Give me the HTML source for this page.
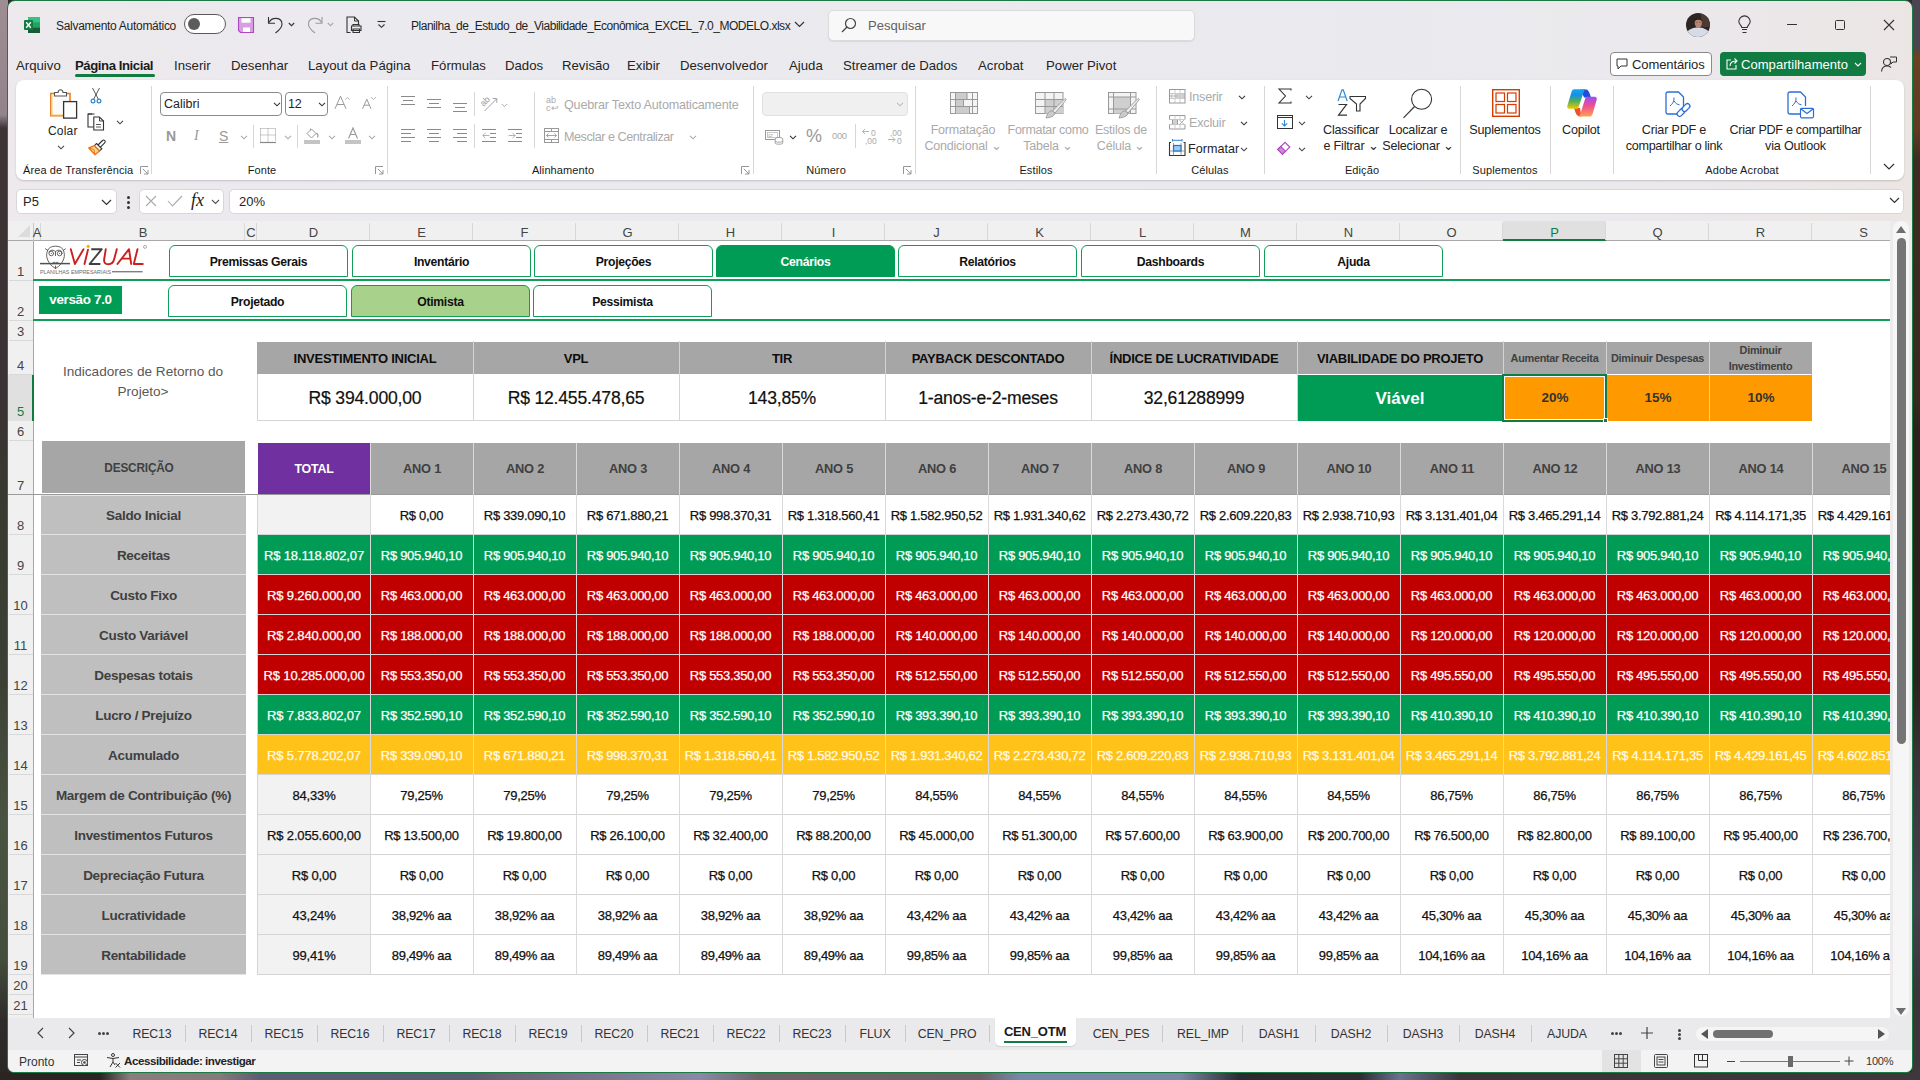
<!DOCTYPE html>
<html><head><meta charset="utf-8"><style>
*{margin:0;padding:0;box-sizing:border-box}
html,body{width:1920px;height:1080px;overflow:hidden;background:#3a3836;font-family:"Liberation Sans",sans-serif}
div{position:absolute}
.t{white-space:nowrap;line-height:1}
.c{display:flex;align-items:center;justify-content:center;white-space:nowrap;overflow:hidden;line-height:1}
svg{position:absolute;overflow:visible}
.ui{color:#242424;font-size:13px}
.cell{font-size:13px;letter-spacing:-0.3px}
.rg{-webkit-text-stroke:0.25px currentColor}
</style></head><body>

<div style="left:0;top:0;width:1920px;height:1080px;background:#2f2b2a"></div>
<div style="left:0;top:0;width:8px;height:1080px;background:linear-gradient(180deg,#9e8e94 0px,#92848a 115px,#3e3436 128px,#3a3234 400px,#383a30 500px,#3c4034 675px,#4a5240 820px,#454d3c 960px,#2e2c2a 1020px,#2a2624 1080px)"></div>
<div style="left:1912px;top:0;width:8px;height:1080px;background:linear-gradient(180deg,#4a4550 0px,#4a4550 48px,#6a4224 55px,#5e3b22 130px,#3f2b21 160px,#3a281f 400px,#2a211c 430px,#2a221e 680px,#3a3338 760px,#45424f 900px,#3a3438 1000px,#3e383c 1080px)"></div>
<div style="left:0;top:1072px;width:1920px;height:8px;background:linear-gradient(90deg,#2a2422 0px,#2a2422 100px,#8a7d7d 130px,#857a7c 220px,#5b5d72 260px,#5a5c70 470px,#6a6275 500px,#8a8aa6 700px,#6e6266 760px,#6a6064 980px,#7888a8 1020px,#7a88a4 1180px,#2a2a30 1240px,#2c2c32 1360px,#6a7290 1400px,#3a3438 1460px,#3e383c 1920px)"></div>
<div style="left:7px;top:0;width:1906px;height:1073px;background:linear-gradient(90deg,#EDE9ED 0px,#EBEAEF 400px,#EAEAEE 1400px,#EBE8EB 1720px,#EBE6E4 1906px);border:1px solid #1E7A45;border-radius:8px 8px 7px 7px"></div>
<svg style="left:24px;top:17px" width="16" height="16" viewBox="0 0 16 16">
<rect x="4" y="0" width="12" height="16" rx="1" fill="#21A366"/>
<rect x="4" y="0" width="12" height="5.3" fill="#33C481"/>
<rect x="4" y="10.7" width="12" height="5.3" fill="#185C37"/>
<rect x="0" y="3" width="9" height="10" rx="1" fill="#107C41"/>
<path d="M2.2 5.2 L6.8 10.8 M6.8 5.2 L2.2 10.8" stroke="#fff" stroke-width="1.4"/>
</svg>
<div class="t" style="left:56px;top:20px;font-size:12px;color:#1f1f1f;letter-spacing:-0.29px">Salvamento Automático</div>
<div style="left:184px;top:14px;width:42px;height:20px;border:1px solid #5a5a5a;border-radius:10px;background:#fff"></div>
<div style="left:188px;top:18px;width:12px;height:12px;border-radius:6px;background:#5c5c5c"></div>
<svg style="left:237px;top:16px" width="18" height="18" viewBox="0 0 18 18">
<path d="M1.5 1.5 H16.5 V16.5 H3.5 L1.5 14.5 Z" fill="#D89EE2" stroke="#B146C2" stroke-width="1.1"/>
<rect x="4.5" y="2.2" width="9" height="4.5" fill="#fff"/>
<rect x="6" y="11.5" width="7" height="4.5" fill="#fff"/>
</svg>
<svg style="left:267px;top:16px" width="18" height="18" viewBox="0 0 18 18">
<path d="M1.5 1 V7.3 H8" fill="none" stroke="#333" stroke-width="1.1"/>
<path d="M2 6.5 C4.5 1 14.8 0.5 15 8 C15.2 11.5 12.5 14 8.5 17" fill="none" stroke="#333" stroke-width="1.1"/>
</svg>
<svg style="left:288px;top:22px" width="7" height="5" viewBox="0 0 7 5"><path d="M0.8 1 L3.5 3.7 L6.2 1" fill="none" stroke="#333" stroke-width="1.1"/></svg>
<svg style="left:306px;top:16px" width="18" height="18" viewBox="0 0 18 18">
<path d="M16 1 V7.3 H9.5" fill="none" stroke="#9a9a9a" stroke-width="1.1"/>
<path d="M15.5 6.5 C13 1 2.7 0.5 2.5 8 C2.3 11.5 5 14 9 17" fill="none" stroke="#9a9a9a" stroke-width="1.1"/>
</svg>
<svg style="left:327px;top:22px" width="7" height="5" viewBox="0 0 7 5"><path d="M0.8 1 L3.5 3.7 L6.2 1" fill="none" stroke="#aaa" stroke-width="1.1"/></svg>
<svg style="left:346px;top:16px" width="17" height="18" viewBox="0 0 17 18">
<path d="M4.5 16.5 H1 V1 H8.5 L12.5 5 V8" fill="none" stroke="#333" stroke-width="1.1"/>
<path d="M8.5 1 V5 H12.5" fill="none" stroke="#333" stroke-width="1"/>
<path d="M7 10 V8.5 H13 V10 M5.5 10 H15 V14.5 H5.5 Z M7 13 H13.5 V16.5 H7 Z" fill="#EDEAEE" stroke="#333" stroke-width="1.1"/>
</svg>
<svg style="left:377px;top:20px" width="9" height="9" viewBox="0 0 9 9"><path d="M0.5 1.5 H8.5" stroke="#333" stroke-width="1.1"/><path d="M1.5 4.5 L4.5 7.3 L7.5 4.5" fill="none" stroke="#333" stroke-width="1.1"/></svg>
<div class="t" style="left:411px;top:20px;font-size:12px;color:#1f1f1f;letter-spacing:-0.475px">Planilha_de_Estudo_de_Viabilidade_Econômica_EXCEL_7.0_MODELO.xlsx</div>
<svg style="left:794px;top:21px" width="11" height="7" viewBox="0 0 11 7"><path d="M1 1 L5.5 5.5 L10 1" fill="none" stroke="#333" stroke-width="1.2"/></svg>
<div style="left:828px;top:10px;width:367px;height:31px;background:#F9F8F9;border:1px solid #DDDADD;border-radius:5px;box-shadow:0 1px 1px rgba(0,0,0,0.08)"></div>
<svg style="left:841px;top:17px" width="16" height="16" viewBox="0 0 16 16"><circle cx="9.5" cy="6.5" r="5" fill="none" stroke="#444" stroke-width="1.2"/><path d="M6 10 L1 15" stroke="#444" stroke-width="1.3"/></svg>
<div class="t" style="left:868px;top:19px;font-size:13px;color:#616161">Pesquisar</div>
<svg style="left:1686px;top:13px" width="24" height="24" viewBox="0 0 24 24">
<defs><clipPath id="av"><circle cx="12" cy="12" r="12"/></clipPath></defs>
<g clip-path="url(#av)"><rect width="24" height="24" fill="#2e2522"/><rect x="15" y="0" width="9" height="14" fill="#4a3a33"/>
<ellipse cx="12.3" cy="10" rx="3.6" ry="4.6" fill="#b88470"/><path d="M8.5 8 C8.5 4.2 16 4.2 16 8 C15 6.3 9.5 6.3 8.5 8Z" fill="#1b1411"/>
<path d="M9.8 9.3 H11.6 M13 9.3 H14.8" stroke="#555" stroke-width="0.6"/>
<path d="M-1 24 C0 17 6 14.5 12 14.5 C18 14.5 24 17 25 24Z" fill="#d7dbe8"/></g></svg>
<svg style="left:1738px;top:16px" width="13" height="18" viewBox="0 0 13 18">
<path d="M3.8 11.5 C3.8 9.5 0.8 8.5 0.8 5.6 A5.7 5.7 0 0 1 12.2 5.6 C12.2 8.5 9.2 9.5 9.2 11.5 Z" fill="none" stroke="#333" stroke-width="1.1"/>
<path d="M4 13.5 H9 M4.5 16.5 H8.5" stroke="#333" stroke-width="1.2"/></svg>
<div style="left:1787px;top:24px;width:10px;height:1px;background:#333"></div>
<div style="left:1835px;top:20px;width:10px;height:10px;border:1px solid #333;border-radius:1.5px"></div>
<svg style="left:1883px;top:19px" width="12" height="12" viewBox="0 0 12 12"><path d="M1 1 L11 11 M11 1 L1 11" stroke="#333" stroke-width="1.1"/></svg>
<div class="t" style="left:16px;top:59px;font-size:13.2px;color:#242424">Arquivo</div>
<div class="t" style="left:75px;top:59px;font-size:13.2px;color:#242424;font-weight:bold;letter-spacing:-0.45px;color:#1b1b1b">Página Inicial</div>
<div class="t" style="left:174px;top:59px;font-size:13.2px;color:#242424">Inserir</div>
<div class="t" style="left:231px;top:59px;font-size:13.2px;color:#242424">Desenhar</div>
<div class="t" style="left:308px;top:59px;font-size:13.2px;color:#242424">Layout da Página</div>
<div class="t" style="left:431px;top:59px;font-size:13.2px;color:#242424">Fórmulas</div>
<div class="t" style="left:505px;top:59px;font-size:13.2px;color:#242424">Dados</div>
<div class="t" style="left:562px;top:59px;font-size:13.2px;color:#242424">Revisão</div>
<div class="t" style="left:627px;top:59px;font-size:13.2px;color:#242424">Exibir</div>
<div class="t" style="left:680px;top:59px;font-size:13.2px;color:#242424">Desenvolvedor</div>
<div class="t" style="left:789px;top:59px;font-size:13.2px;color:#242424">Ajuda</div>
<div class="t" style="left:843px;top:59px;font-size:13.2px;color:#242424">Streamer de Dados</div>
<div class="t" style="left:978px;top:59px;font-size:13.2px;color:#242424">Acrobat</div>
<div class="t" style="left:1046px;top:59px;font-size:13.2px;color:#242424">Power Pivot</div>
<div style="left:75px;top:74px;width:80px;height:3px;background:#107C41;border-radius:2px"></div>
<div style="left:1610px;top:52px;width:102px;height:24px;background:#fff;border:1px solid #8a8a8a;border-radius:4px"></div>
<svg style="left:1616px;top:58px" width="12" height="12" viewBox="0 0 12 12"><path d="M1 1 H11 V8 H5 L2 11 V8 H1 Z" fill="none" stroke="#333" stroke-width="1"/></svg>
<div class="t" style="left:1632px;top:58px;font-size:13px;color:#242424;letter-spacing:-0.1px">Comentários</div>
<div style="left:1720px;top:52px;width:146px;height:24px;background:#107C41;border-radius:4px"></div>
<svg style="left:1726px;top:57px" width="13" height="13" viewBox="0 0 13 13"><path d="M5 3 H1 V12 H10 V8" fill="none" stroke="#fff" stroke-width="1.1"/><path d="M4 9 C4 5 7 4 11 4 M8.5 1.5 L11 4 L8.5 6.5" fill="none" stroke="#fff" stroke-width="1.1"/></svg>
<div class="t" style="left:1741px;top:58px;font-size:13px;color:#fff;letter-spacing:0.05px">Compartilhamento</div>
<svg style="left:1854px;top:62px" width="8" height="5" viewBox="0 0 8 5"><path d="M1 1 L4 4 L7 1" fill="none" stroke="#fff" stroke-width="1.1"/></svg>
<svg style="left:1881px;top:56px" width="16" height="16" viewBox="0 0 16 16"><circle cx="6" cy="6" r="3.5" fill="none" stroke="#333" stroke-width="1.1"/><path d="M0.5 15.5 C1 11 3 10 6 10 C8 10 9 10.5 10 11.5" fill="none" stroke="#333" stroke-width="1.1"/><path d="M9 1 H15.5 V6 H12 L10 8 V6 H9" fill="none" stroke="#333" stroke-width="1"/></svg>
<div style="left:16px;top:80px;width:1888px;height:100px;background:#fff;border-radius:8px;box-shadow:0 1px 2px rgba(0,0,0,0.18)"></div>
<div style="left:16px;top:189px;width:101px;height:25px;background:#fff;border:1px solid #d9d6d9;border-radius:5px"></div>
<div class="t" style="left:23px;top:195px;font-size:13px;color:#242424">P5</div>
<svg style="left:101px;top:199px" width="11" height="7" viewBox="0 0 11 7"><path d="M1 1 L5.5 5.5 L10 1" fill="none" stroke="#333" stroke-width="1.2"/></svg>
<div style="left:127px;top:196px;width:3px;height:3px;background:#333;border-radius:1.5px"></div>
<div style="left:127px;top:201px;width:3px;height:3px;background:#333;border-radius:1.5px"></div>
<div style="left:127px;top:206px;width:3px;height:3px;background:#333;border-radius:1.5px"></div>
<div style="left:139px;top:189px;width:85px;height:25px;background:#fff;border:1px solid #d9d6d9;border-radius:5px"></div>
<svg style="left:145px;top:195px" width="12" height="12" viewBox="0 0 12 12"><path d="M1 1 L11 11 M11 1 L1 11" stroke="#aaa" stroke-width="1.1"/></svg>
<svg style="left:167px;top:195px" width="16" height="12" viewBox="0 0 16 12"><path d="M1 6 L5.5 11 L15 1" fill="none" stroke="#aaa" stroke-width="1.1"/></svg>
<div class="t" style="left:191px;top:191px;font-family:'Liberation Serif';font-size:18px;color:#222"><i>fx</i></div>
<svg style="left:211px;top:199px" width="9" height="6" viewBox="0 0 9 6"><path d="M1 1 L4.5 4.5 L8 1" fill="none" stroke="#555" stroke-width="1.1"/></svg>
<div style="left:229px;top:189px;width:1675px;height:25px;background:#fff;border:1px solid #d9d6d9;border-radius:5px"></div>
<div class="t" style="left:239px;top:195px;font-size:13px;color:#242424">20%</div>
<svg style="left:1889px;top:197px" width="11" height="7" viewBox="0 0 11 7"><path d="M1 1 L5.5 5.5 L10 1" fill="none" stroke="#333" stroke-width="1.2"/></svg>
<div style="left:8px;top:221px;width:1882px;height:797px;background:#fff"></div>
<div style="left:8px;top:221px;width:1882px;height:20px;background:#F0F0F0;border-bottom:1px solid #A8A8A8"></div>
<div style="left:33px;top:223px;width:1px;height:18px;background:#C8C8C8"></div>
<svg style="left:18px;top:225px" width="12" height="12" viewBox="0 0 12 12"><path d="M12 0 V12 H0 Z" fill="#DCDCDC"/></svg>
<div style="left:40px;top:223px;width:1px;height:17px;background:#D8D8D8"></div>
<div class="c" style="left:33px;top:222px;width:8px;height:20px;font-size:13px;color:#444;overflow:visible">A</div>
<div style="left:244px;top:223px;width:1px;height:17px;background:#D8D8D8"></div>
<div class="c" style="left:41px;top:222px;width:204px;height:20px;font-size:13px;color:#444;overflow:visible">B</div>
<div style="left:256px;top:223px;width:1px;height:17px;background:#D8D8D8"></div>
<div class="c" style="left:245px;top:222px;width:12px;height:20px;font-size:13px;color:#444;overflow:visible">C</div>
<div style="left:369px;top:223px;width:1px;height:17px;background:#D8D8D8"></div>
<div class="c" style="left:257px;top:222px;width:113px;height:20px;font-size:13px;color:#444;overflow:visible">D</div>
<div style="left:472px;top:223px;width:1px;height:17px;background:#D8D8D8"></div>
<div class="c" style="left:370px;top:222px;width:103px;height:20px;font-size:13px;color:#444;overflow:visible">E</div>
<div style="left:575px;top:223px;width:1px;height:17px;background:#D8D8D8"></div>
<div class="c" style="left:473px;top:222px;width:103px;height:20px;font-size:13px;color:#444;overflow:visible">F</div>
<div style="left:678px;top:223px;width:1px;height:17px;background:#D8D8D8"></div>
<div class="c" style="left:576px;top:222px;width:103px;height:20px;font-size:13px;color:#444;overflow:visible">G</div>
<div style="left:781px;top:223px;width:1px;height:17px;background:#D8D8D8"></div>
<div class="c" style="left:679px;top:222px;width:103px;height:20px;font-size:13px;color:#444;overflow:visible">H</div>
<div style="left:884px;top:223px;width:1px;height:17px;background:#D8D8D8"></div>
<div class="c" style="left:782px;top:222px;width:103px;height:20px;font-size:13px;color:#444;overflow:visible">I</div>
<div style="left:987px;top:223px;width:1px;height:17px;background:#D8D8D8"></div>
<div class="c" style="left:885px;top:222px;width:103px;height:20px;font-size:13px;color:#444;overflow:visible">J</div>
<div style="left:1090px;top:223px;width:1px;height:17px;background:#D8D8D8"></div>
<div class="c" style="left:988px;top:222px;width:103px;height:20px;font-size:13px;color:#444;overflow:visible">K</div>
<div style="left:1193px;top:223px;width:1px;height:17px;background:#D8D8D8"></div>
<div class="c" style="left:1091px;top:222px;width:103px;height:20px;font-size:13px;color:#444;overflow:visible">L</div>
<div style="left:1296px;top:223px;width:1px;height:17px;background:#D8D8D8"></div>
<div class="c" style="left:1194px;top:222px;width:103px;height:20px;font-size:13px;color:#444;overflow:visible">M</div>
<div style="left:1399px;top:223px;width:1px;height:17px;background:#D8D8D8"></div>
<div class="c" style="left:1297px;top:222px;width:103px;height:20px;font-size:13px;color:#444;overflow:visible">N</div>
<div style="left:1502px;top:223px;width:1px;height:17px;background:#D8D8D8"></div>
<div class="c" style="left:1400px;top:222px;width:103px;height:20px;font-size:13px;color:#444;overflow:visible">O</div>
<div style="left:1503px;top:221px;width:103px;height:20px;background:#E0E0E0;border-bottom:2px solid #107C41"></div>
<div style="left:1605px;top:223px;width:1px;height:17px;background:#D8D8D8"></div>
<div class="c" style="left:1503px;top:222px;width:103px;height:20px;font-size:13px;color:#107C41;overflow:visible">P</div>
<div style="left:1708px;top:223px;width:1px;height:17px;background:#D8D8D8"></div>
<div class="c" style="left:1606px;top:222px;width:103px;height:20px;font-size:13px;color:#444;overflow:visible">Q</div>
<div style="left:1811px;top:223px;width:1px;height:17px;background:#D8D8D8"></div>
<div class="c" style="left:1709px;top:222px;width:103px;height:20px;font-size:13px;color:#444;overflow:visible">R</div>
<div class="c" style="left:1812px;top:222px;width:103px;height:20px;font-size:13px;color:#444;overflow:visible">S</div>
<div style="left:8px;top:241px;width:26px;height:777px;background:#F0F0F0;border-right:1px solid #A8A8A8"></div>
<div style="left:9px;top:280px;width:24px;height:1px;background:#D8D8D8"></div>
<div class="t" style="left:8px;top:265px;width:25px;text-align:center;font-size:13px;color:#444">1</div>
<div style="left:9px;top:320px;width:24px;height:1px;background:#D8D8D8"></div>
<div class="t" style="left:8px;top:305px;width:25px;text-align:center;font-size:13px;color:#444">2</div>
<div style="left:9px;top:340px;width:24px;height:1px;background:#D8D8D8"></div>
<div class="t" style="left:8px;top:325px;width:25px;text-align:center;font-size:13px;color:#444">3</div>
<div style="left:9px;top:374px;width:24px;height:1px;background:#D8D8D8"></div>
<div class="t" style="left:8px;top:359px;width:25px;text-align:center;font-size:13px;color:#444">4</div>
<div style="left:9px;top:420px;width:24px;height:1px;background:#D8D8D8"></div>
<div style="left:8px;top:375px;width:26px;height:46px;background:#E0E0E0;border-right:2px solid #107C41"></div>
<div class="t" style="left:8px;top:405px;width:25px;text-align:center;font-size:13px;color:#107C41">5</div>
<div style="left:9px;top:440px;width:24px;height:1px;background:#D8D8D8"></div>
<div class="t" style="left:8px;top:425px;width:25px;text-align:center;font-size:13px;color:#444">6</div>
<div style="left:9px;top:494px;width:24px;height:1px;background:#D8D8D8"></div>
<div class="t" style="left:8px;top:479px;width:25px;text-align:center;font-size:13px;color:#444">7</div>
<div style="left:9px;top:534px;width:24px;height:1px;background:#D8D8D8"></div>
<div class="t" style="left:8px;top:519px;width:25px;text-align:center;font-size:13px;color:#444">8</div>
<div style="left:9px;top:574px;width:24px;height:1px;background:#D8D8D8"></div>
<div class="t" style="left:8px;top:559px;width:25px;text-align:center;font-size:13px;color:#444">9</div>
<div style="left:9px;top:614px;width:24px;height:1px;background:#D8D8D8"></div>
<div class="t" style="left:8px;top:599px;width:25px;text-align:center;font-size:13px;color:#444">10</div>
<div style="left:9px;top:654px;width:24px;height:1px;background:#D8D8D8"></div>
<div class="t" style="left:8px;top:639px;width:25px;text-align:center;font-size:13px;color:#444">11</div>
<div style="left:9px;top:694px;width:24px;height:1px;background:#D8D8D8"></div>
<div class="t" style="left:8px;top:679px;width:25px;text-align:center;font-size:13px;color:#444">12</div>
<div style="left:9px;top:734px;width:24px;height:1px;background:#D8D8D8"></div>
<div class="t" style="left:8px;top:719px;width:25px;text-align:center;font-size:13px;color:#444">13</div>
<div style="left:9px;top:774px;width:24px;height:1px;background:#D8D8D8"></div>
<div class="t" style="left:8px;top:759px;width:25px;text-align:center;font-size:13px;color:#444">14</div>
<div style="left:9px;top:814px;width:24px;height:1px;background:#D8D8D8"></div>
<div class="t" style="left:8px;top:799px;width:25px;text-align:center;font-size:13px;color:#444">15</div>
<div style="left:9px;top:854px;width:24px;height:1px;background:#D8D8D8"></div>
<div class="t" style="left:8px;top:839px;width:25px;text-align:center;font-size:13px;color:#444">16</div>
<div style="left:9px;top:894px;width:24px;height:1px;background:#D8D8D8"></div>
<div class="t" style="left:8px;top:879px;width:25px;text-align:center;font-size:13px;color:#444">17</div>
<div style="left:9px;top:934px;width:24px;height:1px;background:#D8D8D8"></div>
<div class="t" style="left:8px;top:919px;width:25px;text-align:center;font-size:13px;color:#444">18</div>
<div style="left:9px;top:974px;width:24px;height:1px;background:#D8D8D8"></div>
<div class="t" style="left:8px;top:959px;width:25px;text-align:center;font-size:13px;color:#444">19</div>
<div style="left:9px;top:994px;width:24px;height:1px;background:#D8D8D8"></div>
<div class="t" style="left:8px;top:979px;width:25px;text-align:center;font-size:13px;color:#444">20</div>
<div style="left:9px;top:1014px;width:24px;height:1px;background:#D8D8D8"></div>
<div class="t" style="left:8px;top:999px;width:25px;text-align:center;font-size:13px;color:#444">21</div>
<div style="left:8px;top:494px;width:1882px;height:1px;background:#9a9a9a"></div>
<div style="left:1890px;top:221px;width:22px;height:797px;background:#EDEAEE"></div>
<div style="left:1893px;top:221px;width:16px;height:795px;background:#F7F6F7;border-radius:8px"></div>
<svg style="left:1896px;top:226px" width="10" height="7" viewBox="0 0 10 7"><path d="M5 0 L10 7 H0 Z" fill="#6e6e6e"/></svg>
<div style="left:1897px;top:238px;width:9px;height:506px;background:#757575;border-radius:5px"></div>
<svg style="left:1896px;top:1008px" width="10" height="7" viewBox="0 0 10 7"><path d="M0 0 H10 L5 7 Z" fill="#6e6e6e"/></svg>
<div style="left:8px;top:1018px;width:1904px;height:32px;background:#EAE9EC"></div>
<svg style="left:36px;top:1027px" width="8" height="12" viewBox="0 0 8 12"><path d="M7 1 L2 6 L7 11" fill="none" stroke="#444" stroke-width="1.2"/></svg>
<svg style="left:68px;top:1027px" width="8" height="12" viewBox="0 0 8 12"><path d="M1 1 L6 6 L1 11" fill="none" stroke="#444" stroke-width="1.2"/></svg>
<div style="left:98px;top:1032px;width:3px;height:3px;background:#444;border-radius:1.5px"></div>
<div style="left:102px;top:1032px;width:3px;height:3px;background:#444;border-radius:1.5px"></div>
<div style="left:106px;top:1032px;width:3px;height:3px;background:#444;border-radius:1.5px"></div>
<div class="c" style="left:112px;top:1024px;width:80px;height:20px;font-size:12.3px;color:#333;letter-spacing:-0.1px">REC13</div>
<div class="c" style="left:178px;top:1024px;width:80px;height:20px;font-size:12.3px;color:#333;letter-spacing:-0.1px">REC14</div>
<div class="c" style="left:244px;top:1024px;width:80px;height:20px;font-size:12.3px;color:#333;letter-spacing:-0.1px">REC15</div>
<div class="c" style="left:310px;top:1024px;width:80px;height:20px;font-size:12.3px;color:#333;letter-spacing:-0.1px">REC16</div>
<div class="c" style="left:376px;top:1024px;width:80px;height:20px;font-size:12.3px;color:#333;letter-spacing:-0.1px">REC17</div>
<div class="c" style="left:442px;top:1024px;width:80px;height:20px;font-size:12.3px;color:#333;letter-spacing:-0.1px">REC18</div>
<div class="c" style="left:508px;top:1024px;width:80px;height:20px;font-size:12.3px;color:#333;letter-spacing:-0.1px">REC19</div>
<div class="c" style="left:574px;top:1024px;width:80px;height:20px;font-size:12.3px;color:#333;letter-spacing:-0.1px">REC20</div>
<div class="c" style="left:640px;top:1024px;width:80px;height:20px;font-size:12.3px;color:#333;letter-spacing:-0.1px">REC21</div>
<div class="c" style="left:706px;top:1024px;width:80px;height:20px;font-size:12.3px;color:#333;letter-spacing:-0.1px">REC22</div>
<div class="c" style="left:772px;top:1024px;width:80px;height:20px;font-size:12.3px;color:#333;letter-spacing:-0.1px">REC23</div>
<div class="c" style="left:835px;top:1024px;width:80px;height:20px;font-size:12.3px;color:#333;letter-spacing:-0.1px">FLUX</div>
<div class="c" style="left:907px;top:1024px;width:80px;height:20px;font-size:12.3px;color:#333;letter-spacing:-0.1px">CEN_PRO</div>
<div style="left:995px;top:1018px;width:81px;height:28px;background:#fff;border-radius:0 0 5px 5px;box-shadow:0 1px 1px rgba(0,0,0,0.12)"></div>
<div class="c" style="left:995px;top:1021px;width:80px;height:21px;font-size:13px;font-weight:bold;color:#1a1a1a;letter-spacing:-0.2px">CEN_OTM</div>
<div style="left:1004px;top:1041px;width:63px;height:2px;background:#107C41"></div>
<div class="c" style="left:1081px;top:1024px;width:80px;height:20px;font-size:12.3px;color:#333;letter-spacing:-0.1px">CEN_PES</div>
<div class="c" style="left:1163px;top:1024px;width:80px;height:20px;font-size:12.3px;color:#333;letter-spacing:-0.1px">REL_IMP</div>
<div class="c" style="left:1239px;top:1024px;width:80px;height:20px;font-size:12.3px;color:#333;letter-spacing:-0.1px">DASH1</div>
<div class="c" style="left:1311px;top:1024px;width:80px;height:20px;font-size:12.3px;color:#333;letter-spacing:-0.1px">DASH2</div>
<div class="c" style="left:1383px;top:1024px;width:80px;height:20px;font-size:12.3px;color:#333;letter-spacing:-0.1px">DASH3</div>
<div class="c" style="left:1455px;top:1024px;width:80px;height:20px;font-size:12.3px;color:#333;letter-spacing:-0.1px">DASH4</div>
<div class="c" style="left:1527px;top:1024px;width:80px;height:20px;font-size:12.3px;color:#333;letter-spacing:-0.1px">AJUDA</div>
<div style="left:185px;top:1025px;width:1px;height:17px;background:#C9C9C9"></div>
<div style="left:251px;top:1025px;width:1px;height:17px;background:#C9C9C9"></div>
<div style="left:317px;top:1025px;width:1px;height:17px;background:#C9C9C9"></div>
<div style="left:383px;top:1025px;width:1px;height:17px;background:#C9C9C9"></div>
<div style="left:449px;top:1025px;width:1px;height:17px;background:#C9C9C9"></div>
<div style="left:515px;top:1025px;width:1px;height:17px;background:#C9C9C9"></div>
<div style="left:581px;top:1025px;width:1px;height:17px;background:#C9C9C9"></div>
<div style="left:647px;top:1025px;width:1px;height:17px;background:#C9C9C9"></div>
<div style="left:713px;top:1025px;width:1px;height:17px;background:#C9C9C9"></div>
<div style="left:779px;top:1025px;width:1px;height:17px;background:#C9C9C9"></div>
<div style="left:845px;top:1025px;width:1px;height:17px;background:#C9C9C9"></div>
<div style="left:905px;top:1025px;width:1px;height:17px;background:#C9C9C9"></div>
<div style="left:989px;top:1025px;width:1px;height:17px;background:#C9C9C9"></div>
<div style="left:1162px;top:1025px;width:1px;height:17px;background:#C9C9C9"></div>
<div style="left:1242px;top:1025px;width:1px;height:17px;background:#C9C9C9"></div>
<div style="left:1315px;top:1025px;width:1px;height:17px;background:#C9C9C9"></div>
<div style="left:1387px;top:1025px;width:1px;height:17px;background:#C9C9C9"></div>
<div style="left:1459px;top:1025px;width:1px;height:17px;background:#C9C9C9"></div>
<div style="left:1531px;top:1025px;width:1px;height:17px;background:#C9C9C9"></div>
<div style="left:1611px;top:1032px;width:3px;height:3px;background:#444;border-radius:1.5px"></div>
<div style="left:1615px;top:1032px;width:3px;height:3px;background:#444;border-radius:1.5px"></div>
<div style="left:1619px;top:1032px;width:3px;height:3px;background:#444;border-radius:1.5px"></div>
<svg style="left:1641px;top:1027px" width="12" height="12" viewBox="0 0 12 12"><path d="M6 0 V12 M0 6 H12" stroke="#444" stroke-width="1.2"/></svg>
<div style="left:1678px;top:1029px;width:3px;height:3px;background:#444;border-radius:1.5px"></div>
<div style="left:1678px;top:1033px;width:3px;height:3px;background:#444;border-radius:1.5px"></div>
<div style="left:1678px;top:1037px;width:3px;height:3px;background:#444;border-radius:1.5px"></div>
<div style="left:1696px;top:1019px;width:195px;height:29px;background:#EAE9EC"></div>
<div style="left:1696px;top:1027px;width:193px;height:14px;background:#F6F5F6;border-radius:7px"></div>
<svg style="left:1701px;top:1029px" width="7" height="10" viewBox="0 0 7 10"><path d="M7 0 V10 L0 5 Z" fill="#555"/></svg>
<div style="left:1713px;top:1030px;width:60px;height:8px;background:#707070;border-radius:4px"></div>
<svg style="left:1878px;top:1029px" width="7" height="10" viewBox="0 0 7 10"><path d="M0 0 V10 L7 5 Z" fill="#555"/></svg>
<div style="left:8px;top:1050px;width:1904px;height:22px;background:#F3F3F3;border-radius:0 0 7px 7px"></div>
<div class="t" style="left:19px;top:1056px;font-size:12px;color:#333">Pronto</div>
<svg style="left:74px;top:1054px" width="15" height="13" viewBox="0 0 15 13"><rect x="0.5" y="0.5" width="13" height="11" fill="none" stroke="#444"/><path d="M0.5 3 H13.5 M3 6 H7 M3 8.5 H6" stroke="#444"/><circle cx="10.5" cy="8.5" r="3" fill="#F8F8F8" stroke="#444"/><circle cx="10.5" cy="8.5" r="1.3" fill="#444"/></svg>
<svg style="left:106px;top:1053px" width="15" height="15" viewBox="0 0 15 15"><circle cx="7" cy="2" r="1.5" fill="none" stroke="#333"/><path d="M1 4.5 L7 5.5 L13 4.5 M7 5.5 V9 L4 14 M7 9 L9 12 M9.5 10 L14 14.5 M14 10 L9.5 14.5" fill="none" stroke="#333"/></svg>
<div class="t" style="left:124px;top:1055px;font-size:11.6px;color:#242424;font-weight:bold;letter-spacing:-0.45px">Acessibilidade: investigar</div>
<div style="left:1602px;top:1050px;width:39px;height:22px;background:#E3E3E3"></div>
<svg style="left:1614px;top:1054px" width="14" height="14" viewBox="0 0 14 14"><rect x="0.5" y="0.5" width="13" height="13" fill="none" stroke="#444"/><path d="M0.5 4.8 H13.5 M0.5 9.2 H13.5 M4.8 0.5 V13.5 M9.2 0.5 V13.5" stroke="#444"/></svg>
<svg style="left:1654px;top:1054px" width="14" height="14" viewBox="0 0 14 14"><rect x="0.5" y="0.5" width="13" height="13" rx="1" fill="none" stroke="#444"/><rect x="3" y="3" width="8" height="8" fill="none" stroke="#444"/><path d="M4.5 5.5 H9.5 M4.5 8 H9.5" stroke="#444"/></svg>
<svg style="left:1694px;top:1054px" width="14" height="14" viewBox="0 0 14 14"><rect x="0.5" y="0.5" width="13" height="12.5" fill="none" stroke="#333"/><path d="M4.5 0.5 V6.5 H13.5 M8.5 0.5 V6.5" fill="none" stroke="#333"/></svg>
<div style="left:1727px;top:1061px;width:8px;height:1px;background:#444"></div>
<div style="left:1740px;top:1061px;width:100px;height:1px;background:#777"></div>
<div style="left:1788px;top:1056px;width:5px;height:11px;background:#6a6a6a"></div>
<svg style="left:1844px;top:1056px" width="10" height="10" viewBox="0 0 10 10"><path d="M5 0.5 V9.5 M0.5 5 H9.5" stroke="#444"/></svg>
<div class="t" style="left:1866px;top:1056px;font-size:11px;color:#333;letter-spacing:-0.2px">100%</div>
<div style="left:33px;top:279px;width:1857px;height:2px;background:#0F9D58"></div>
<div style="left:33px;top:319px;width:1857px;height:2px;background:#0F9D58"></div>
<svg style="left:36px;top:241px" width="120" height="40" viewBox="0 0 120 40">
<g fill="none" stroke="#5a5a5a" stroke-width="0.95" stroke-linecap="round">
<path d="M9.4 7.8 L11.6 9.4 M29.4 7.8 L27.5 9.4"/>
<path d="M11.6 9.4 C13 3.6 26 3.6 27.5 9.4"/>
<path d="M11.6 9.4 C10.5 12 10.4 15 11 17 C12 21 15 25 19.5 27.5 C24 25 27 21 28 17 C28.6 15 28.5 12 27.5 9.4"/>
<circle cx="15.3" cy="12.5" r="2.3"/><circle cx="23.6" cy="12.5" r="2.3"/>
<path d="M12.8 11 C14.5 8.5 17.5 8.8 19.5 10.6 C21.5 8.8 24.5 8.5 26.2 11"/>
<path d="M19.5 10.6 V14.6 M19.5 25 V27.5 M16.5 22 C17.5 21 18.5 21 19.5 22 C20.5 21 21.5 21 22.5 22"/>
</g>
<circle cx="15.3" cy="12.5" r="0.6" fill="#5a5a5a"/><circle cx="23.6" cy="12.5" r="0.6" fill="#5a5a5a"/>
<path d="M4 22.6 H34" stroke="#505050" stroke-width="1.5"/>
<g fill="none" stroke="#CC1F1F" stroke-width="1.9" stroke-linejoin="round" stroke-linecap="round">
<path d="M34.8 8.2 L38.9 23 L47.5 8.2"/>
<path d="M52 8.6 L48.5 23"/>
<path d="M69.8 8.2 L68.2 18 C67.6 21.8 69.4 23.2 72.4 23.2 C75.8 23.2 77.4 21.6 78.2 18 L80.8 8.2"/>
<path d="M81.4 23 L93 8.2 L95.2 23 M86.5 17.6 H94.4"/>
<path d="M101.5 8.2 L97.8 23 H106.8"/>
</g>
<path d="M55.2 8.2 H65.8 L53.6 23 H64.4" fill="none" stroke="#404040" stroke-width="1.9" stroke-linejoin="round"/>
<circle cx="52.2" cy="5.3" r="1.6" fill="#F5B000"/>
<circle cx="109" cy="5.9" r="1.5" fill="none" stroke="#999" stroke-width="0.8"/>
<text x="4" y="32.8" font-family="Liberation Sans" font-size="4.6" fill="#6a6a6a" textLength="71" lengthAdjust="spacingAndGlyphs">PLANILHAS EMPRESARIAIS</text>
<path d="M76 30.7 H106.6" stroke="#808080" stroke-width="1.4"/>
</svg>
<div class="c" style="left:39px;top:286px;width:83px;height:28px;background:#009C56;color:#fff;font-weight:bold;font-size:13.4px;letter-spacing:-0.3px">versão 7.0</div>
<div class="c" style="left:169px;top:245px;width:179px;height:32px;background:#fff;border:1.5px solid #0F9D58;color:#111;border-radius:6px 6px 0 0;font-weight:bold;font-size:12.2px;letter-spacing:-0.3px;padding-top:2px">Premissas Gerais</div>
<div class="c" style="left:352px;top:245px;width:179px;height:32px;background:#fff;border:1.5px solid #0F9D58;color:#111;border-radius:6px 6px 0 0;font-weight:bold;font-size:12.2px;letter-spacing:-0.3px;padding-top:2px">Inventário</div>
<div class="c" style="left:534px;top:245px;width:179px;height:32px;background:#fff;border:1.5px solid #0F9D58;color:#111;border-radius:6px 6px 0 0;font-weight:bold;font-size:12.2px;letter-spacing:-0.3px;padding-top:2px">Projeções</div>
<div class="c" style="left:716px;top:245px;width:179px;height:32px;background:#009C56;border:1.5px solid #009C56;color:#fff;border-radius:6px 6px 0 0;font-weight:bold;font-size:12.2px;letter-spacing:-0.3px;padding-top:2px">Cenários</div>
<div class="c" style="left:898px;top:245px;width:179px;height:32px;background:#fff;border:1.5px solid #0F9D58;color:#111;border-radius:6px 6px 0 0;font-weight:bold;font-size:12.2px;letter-spacing:-0.3px;padding-top:2px">Relatórios</div>
<div class="c" style="left:1081px;top:245px;width:179px;height:32px;background:#fff;border:1.5px solid #0F9D58;color:#111;border-radius:6px 6px 0 0;font-weight:bold;font-size:12.2px;letter-spacing:-0.3px;padding-top:2px">Dashboards</div>
<div class="c" style="left:1264px;top:245px;width:179px;height:32px;background:#fff;border:1.5px solid #0F9D58;color:#111;border-radius:6px 6px 0 0;font-weight:bold;font-size:12.2px;letter-spacing:-0.3px;padding-top:2px">Ajuda</div>
<div class="c" style="left:168px;top:285px;width:179px;height:32px;background:#fff;border:1.5px solid #0F9D58;color:#111;border-radius:6px 6px 0 0;font-weight:bold;font-size:12.2px;letter-spacing:-0.3px;padding-top:2px">Projetado</div>
<div class="c" style="left:351px;top:285px;width:179px;height:32px;background:#A8D28C;border:1.5px solid #0F9D58;color:#111;border-radius:6px 6px 0 0;font-weight:bold;font-size:12.2px;letter-spacing:-0.3px;padding-top:2px">Otimista</div>
<div class="c" style="left:533px;top:285px;width:179px;height:32px;background:#fff;border:1.5px solid #0F9D58;color:#111;border-radius:6px 6px 0 0;font-weight:bold;font-size:12.2px;letter-spacing:-0.3px;padding-top:2px">Pessimista</div>
<div style="left:41px;top:362px;width:204px;text-align:center;font-size:13.6px;line-height:20px;color:#595959">Indicadores de Retorno do<br>Projeto&gt;</div>
<div style="left:257px;top:342px;width:1555px;height:32px;background:#A6A6A6"></div>
<div style="left:257px;top:374px;width:1555px;height:47px;background:#fff;border:1px solid #D4D4D4;border-top:none"></div>
<div class="c" style="left:257px;top:341px;width:216px;height:34px;font-weight:bold;font-size:13px;color:#0d0d0d;letter-spacing:-0.25px">INVESTIMENTO INICIAL</div>
<div class="c" style="left:257px;top:376px;width:216px;height:46px;font-size:17.6px;color:#111;letter-spacing:-0.2px;-webkit-text-stroke:0.2px #111">R$ 394.000,00</div>
<div class="c" style="left:473px;top:341px;width:206px;height:34px;font-weight:bold;font-size:13px;color:#0d0d0d;letter-spacing:-0.25px">VPL</div>
<div class="c" style="left:473px;top:376px;width:206px;height:46px;font-size:17.6px;color:#111;letter-spacing:-0.2px;-webkit-text-stroke:0.2px #111">R$ 12.455.478,65</div>
<div style="left:473px;top:341px;width:1px;height:80px;background:#D4D4D4"></div>
<div class="c" style="left:679px;top:341px;width:206px;height:34px;font-weight:bold;font-size:13px;color:#0d0d0d;letter-spacing:-0.25px">TIR</div>
<div class="c" style="left:679px;top:376px;width:206px;height:46px;font-size:17.6px;color:#111;letter-spacing:-0.2px;-webkit-text-stroke:0.2px #111">143,85%</div>
<div style="left:679px;top:341px;width:1px;height:80px;background:#D4D4D4"></div>
<div class="c" style="left:885px;top:341px;width:206px;height:34px;font-weight:bold;font-size:13px;color:#0d0d0d;letter-spacing:-0.25px">PAYBACK DESCONTADO</div>
<div class="c" style="left:885px;top:376px;width:206px;height:46px;font-size:17.6px;color:#111;letter-spacing:-0.2px;-webkit-text-stroke:0.2px #111">1-anos-e-2-meses</div>
<div style="left:885px;top:341px;width:1px;height:80px;background:#D4D4D4"></div>
<div class="c" style="left:1091px;top:341px;width:206px;height:34px;font-weight:bold;font-size:13px;color:#0d0d0d;letter-spacing:-0.25px">ÍNDICE DE LUCRATIVIDADE</div>
<div class="c" style="left:1091px;top:376px;width:206px;height:46px;font-size:17.6px;color:#111;letter-spacing:-0.2px;-webkit-text-stroke:0.2px #111">32,61288999</div>
<div style="left:1091px;top:341px;width:1px;height:80px;background:#D4D4D4"></div>
<div class="c" style="left:1297px;top:341px;width:206px;height:34px;font-weight:bold;font-size:13px;color:#0d0d0d;letter-spacing:-0.25px">VIABILIDADE DO PROJETO</div>
<div class="c" style="left:1297px;top:375px;width:206px;height:46px;background:#009C56;color:#fff;font-weight:bold;font-size:17px;padding-top:0px">Viável</div>
<div style="left:1297px;top:341px;width:1px;height:80px;background:#D4D4D4"></div>
<div style="left:1503px;top:341px;width:1px;height:80px;background:#D4D4D4"></div>
<div class="c" style="left:1503px;top:341px;width:103px;height:34px;font-weight:bold;font-size:10.9px;color:#404040;letter-spacing:-0.3px"><span style="">Aumentar Receita</span></div>
<div class="c" style="left:1504px;top:375px;width:102px;height:46px;background:#FF9900;color:#333;font-weight:bold;font-size:13.5px">20%</div>
<div style="left:1606px;top:341px;width:1px;height:80px;background:#D4D4D4"></div>
<div class="c" style="left:1606px;top:341px;width:103px;height:34px;font-weight:bold;font-size:10.9px;color:#404040;letter-spacing:-0.3px"><span style="">Diminuir Despesas</span></div>
<div class="c" style="left:1607px;top:375px;width:102px;height:46px;background:#FF9900;color:#333;font-weight:bold;font-size:13.5px">15%</div>
<div style="left:1709px;top:341px;width:1px;height:80px;background:#D4D4D4"></div>
<div class="c" style="left:1709px;top:341px;width:103px;height:34px;font-weight:bold;font-size:10.9px;color:#404040;letter-spacing:-0.3px"><span style="line-height:16px;text-align:center;white-space:normal">Diminuir<br>Investimento</span></div>
<div class="c" style="left:1710px;top:375px;width:102px;height:46px;background:#FF9900;color:#333;font-weight:bold;font-size:13.5px">10%</div>
<div style="left:1502px;top:374px;width:105px;height:48px;border:2px solid #107C41"></div>
<div style="left:1504px;top:376px;width:101px;height:44px;border:1px solid #fff"></div>
<div style="left:1603px;top:418px;width:5px;height:5px;background:#107C41;border:1px solid #fff"></div>
<div class="c" style="left:42px;top:441px;width:203px;height:52px;background:#A6A6A6;font-weight:bold;font-size:11.85px;color:#404040;letter-spacing:-0.2px;padding-top:4px;padding-right:9px">DESCRIÇÃO</div>
<div class="c" style="left:258px;top:443px;width:112px;height:51px;background:#7030A0;font-weight:bold;font-size:12.4px;color:#fff;letter-spacing:-0.2px;padding-top:2px">TOTAL</div>
<div class="c" style="left:371px;top:443px;width:102px;height:51px;justify-content:flex-start;background:#A6A6A6;font-weight:bold;font-size:12.8px;color:#404040;letter-spacing:-0.2px;padding-top:2px"><span style="display:block;flex-shrink:0;width:102px;text-align:center">ANO 1</span></div>
<div class="c" style="left:474px;top:443px;width:102px;height:51px;justify-content:flex-start;background:#A6A6A6;font-weight:bold;font-size:12.8px;color:#404040;letter-spacing:-0.2px;padding-top:2px"><span style="display:block;flex-shrink:0;width:102px;text-align:center">ANO 2</span></div>
<div class="c" style="left:577px;top:443px;width:102px;height:51px;justify-content:flex-start;background:#A6A6A6;font-weight:bold;font-size:12.8px;color:#404040;letter-spacing:-0.2px;padding-top:2px"><span style="display:block;flex-shrink:0;width:102px;text-align:center">ANO 3</span></div>
<div class="c" style="left:680px;top:443px;width:102px;height:51px;justify-content:flex-start;background:#A6A6A6;font-weight:bold;font-size:12.8px;color:#404040;letter-spacing:-0.2px;padding-top:2px"><span style="display:block;flex-shrink:0;width:102px;text-align:center">ANO 4</span></div>
<div class="c" style="left:783px;top:443px;width:102px;height:51px;justify-content:flex-start;background:#A6A6A6;font-weight:bold;font-size:12.8px;color:#404040;letter-spacing:-0.2px;padding-top:2px"><span style="display:block;flex-shrink:0;width:102px;text-align:center">ANO 5</span></div>
<div class="c" style="left:886px;top:443px;width:102px;height:51px;justify-content:flex-start;background:#A6A6A6;font-weight:bold;font-size:12.8px;color:#404040;letter-spacing:-0.2px;padding-top:2px"><span style="display:block;flex-shrink:0;width:102px;text-align:center">ANO 6</span></div>
<div class="c" style="left:989px;top:443px;width:102px;height:51px;justify-content:flex-start;background:#A6A6A6;font-weight:bold;font-size:12.8px;color:#404040;letter-spacing:-0.2px;padding-top:2px"><span style="display:block;flex-shrink:0;width:102px;text-align:center">ANO 7</span></div>
<div class="c" style="left:1092px;top:443px;width:102px;height:51px;justify-content:flex-start;background:#A6A6A6;font-weight:bold;font-size:12.8px;color:#404040;letter-spacing:-0.2px;padding-top:2px"><span style="display:block;flex-shrink:0;width:102px;text-align:center">ANO 8</span></div>
<div class="c" style="left:1195px;top:443px;width:102px;height:51px;justify-content:flex-start;background:#A6A6A6;font-weight:bold;font-size:12.8px;color:#404040;letter-spacing:-0.2px;padding-top:2px"><span style="display:block;flex-shrink:0;width:102px;text-align:center">ANO 9</span></div>
<div class="c" style="left:1298px;top:443px;width:102px;height:51px;justify-content:flex-start;background:#A6A6A6;font-weight:bold;font-size:12.8px;color:#404040;letter-spacing:-0.2px;padding-top:2px"><span style="display:block;flex-shrink:0;width:102px;text-align:center">ANO 10</span></div>
<div class="c" style="left:1401px;top:443px;width:102px;height:51px;justify-content:flex-start;background:#A6A6A6;font-weight:bold;font-size:12.8px;color:#404040;letter-spacing:-0.2px;padding-top:2px"><span style="display:block;flex-shrink:0;width:102px;text-align:center">ANO 11</span></div>
<div class="c" style="left:1504px;top:443px;width:102px;height:51px;justify-content:flex-start;background:#A6A6A6;font-weight:bold;font-size:12.8px;color:#404040;letter-spacing:-0.2px;padding-top:2px"><span style="display:block;flex-shrink:0;width:102px;text-align:center">ANO 12</span></div>
<div class="c" style="left:1607px;top:443px;width:102px;height:51px;justify-content:flex-start;background:#A6A6A6;font-weight:bold;font-size:12.8px;color:#404040;letter-spacing:-0.2px;padding-top:2px"><span style="display:block;flex-shrink:0;width:102px;text-align:center">ANO 13</span></div>
<div class="c" style="left:1710px;top:443px;width:102px;height:51px;justify-content:flex-start;background:#A6A6A6;font-weight:bold;font-size:12.8px;color:#404040;letter-spacing:-0.2px;padding-top:2px"><span style="display:block;flex-shrink:0;width:102px;text-align:center">ANO 14</span></div>
<div class="c" style="left:1813px;top:443px;width:77px;height:51px;justify-content:flex-start;background:#A6A6A6;font-weight:bold;font-size:12.8px;color:#404040;letter-spacing:-0.2px;padding-top:2px"><span style="display:block;flex-shrink:0;width:102px;text-align:center">ANO 15</span></div>
<div style="left:41px;top:495px;width:205px;height:480px;background:#BFBFBF"></div>
<div style="left:257px;top:495px;width:1633px;height:480px;background:#fff"></div>
<div style="left:257px;top:495px;width:1px;height:480px;background:#D4D4D4"></div>
<div class="c" style="left:41px;top:495px;width:205px;height:40px;font-weight:bold;font-size:13.5px;color:#404040;letter-spacing:-0.3px;padding-top:1px">Saldo Inicial</div>
<div style="left:258px;top:495px;width:1632px;height:40px;background:#fff"></div>
<div style="left:258px;top:495px;width:112px;height:40px;background:#F2F2F2"></div>
<div class="c" style="left:258px;top:495px;width:112px;height:40px;color:#111;font-size:13px;letter-spacing:-0.15px;-webkit-text-stroke:0.25px #111"></div>
<div class="c rg" style="left:370px;top:495px;width:103px;height:40px;justify-content:flex-start;color:#111;font-size:13px;letter-spacing:-0.3px"><span style="display:block;flex-shrink:0;width:103px;text-align:center">R$ 0,00</span></div>
<div class="c rg" style="left:473px;top:495px;width:103px;height:40px;justify-content:flex-start;color:#111;font-size:13px;letter-spacing:-0.3px"><span style="display:block;flex-shrink:0;width:103px;text-align:center">R$ 339.090,10</span></div>
<div class="c rg" style="left:576px;top:495px;width:103px;height:40px;justify-content:flex-start;color:#111;font-size:13px;letter-spacing:-0.3px"><span style="display:block;flex-shrink:0;width:103px;text-align:center">R$ 671.880,21</span></div>
<div class="c rg" style="left:679px;top:495px;width:103px;height:40px;justify-content:flex-start;color:#111;font-size:13px;letter-spacing:-0.3px"><span style="display:block;flex-shrink:0;width:103px;text-align:center">R$ 998.370,31</span></div>
<div class="c rg" style="left:782px;top:495px;width:103px;height:40px;justify-content:flex-start;color:#111;font-size:13px;letter-spacing:-0.3px"><span style="display:block;flex-shrink:0;width:103px;text-align:center">R$ 1.318.560,41</span></div>
<div class="c rg" style="left:885px;top:495px;width:103px;height:40px;justify-content:flex-start;color:#111;font-size:13px;letter-spacing:-0.3px"><span style="display:block;flex-shrink:0;width:103px;text-align:center">R$ 1.582.950,52</span></div>
<div class="c rg" style="left:988px;top:495px;width:103px;height:40px;justify-content:flex-start;color:#111;font-size:13px;letter-spacing:-0.3px"><span style="display:block;flex-shrink:0;width:103px;text-align:center">R$ 1.931.340,62</span></div>
<div class="c rg" style="left:1091px;top:495px;width:103px;height:40px;justify-content:flex-start;color:#111;font-size:13px;letter-spacing:-0.3px"><span style="display:block;flex-shrink:0;width:103px;text-align:center">R$ 2.273.430,72</span></div>
<div class="c rg" style="left:1194px;top:495px;width:103px;height:40px;justify-content:flex-start;color:#111;font-size:13px;letter-spacing:-0.3px"><span style="display:block;flex-shrink:0;width:103px;text-align:center">R$ 2.609.220,83</span></div>
<div class="c rg" style="left:1297px;top:495px;width:103px;height:40px;justify-content:flex-start;color:#111;font-size:13px;letter-spacing:-0.3px"><span style="display:block;flex-shrink:0;width:103px;text-align:center">R$ 2.938.710,93</span></div>
<div class="c rg" style="left:1400px;top:495px;width:103px;height:40px;justify-content:flex-start;color:#111;font-size:13px;letter-spacing:-0.3px"><span style="display:block;flex-shrink:0;width:103px;text-align:center">R$ 3.131.401,04</span></div>
<div class="c rg" style="left:1503px;top:495px;width:103px;height:40px;justify-content:flex-start;color:#111;font-size:13px;letter-spacing:-0.3px"><span style="display:block;flex-shrink:0;width:103px;text-align:center">R$ 3.465.291,14</span></div>
<div class="c rg" style="left:1606px;top:495px;width:103px;height:40px;justify-content:flex-start;color:#111;font-size:13px;letter-spacing:-0.3px"><span style="display:block;flex-shrink:0;width:103px;text-align:center">R$ 3.792.881,24</span></div>
<div class="c rg" style="left:1709px;top:495px;width:103px;height:40px;justify-content:flex-start;color:#111;font-size:13px;letter-spacing:-0.3px"><span style="display:block;flex-shrink:0;width:103px;text-align:center">R$ 4.114.171,35</span></div>
<div class="c rg" style="left:1812px;top:495px;width:78px;height:40px;justify-content:flex-start;color:#111;font-size:13px;letter-spacing:-0.3px"><span style="display:block;flex-shrink:0;width:103px;text-align:center">R$ 4.429.161,45</span></div>
<div style="left:41px;top:534px;width:205px;height:1px;background:#E3E3E3"></div>
<div style="left:257px;top:534px;width:1633px;height:1px;background:#D4D4D4"></div>
<div class="c" style="left:41px;top:535px;width:205px;height:40px;font-weight:bold;font-size:13.5px;color:#404040;letter-spacing:-0.3px;padding-top:1px">Receitas</div>
<div style="left:258px;top:535px;width:1632px;height:40px;background:#009C56"></div>
<div class="c" style="left:258px;top:535px;width:112px;height:40px;color:#fff;font-size:13px;letter-spacing:-0.15px;-webkit-text-stroke:0.25px #fff">R$ 18.118.802,07</div>
<div class="c rg" style="left:370px;top:535px;width:103px;height:40px;justify-content:flex-start;color:#fff;font-size:13px;letter-spacing:-0.3px"><span style="display:block;flex-shrink:0;width:103px;text-align:center">R$ 905.940,10</span></div>
<div class="c rg" style="left:473px;top:535px;width:103px;height:40px;justify-content:flex-start;color:#fff;font-size:13px;letter-spacing:-0.3px"><span style="display:block;flex-shrink:0;width:103px;text-align:center">R$ 905.940,10</span></div>
<div class="c rg" style="left:576px;top:535px;width:103px;height:40px;justify-content:flex-start;color:#fff;font-size:13px;letter-spacing:-0.3px"><span style="display:block;flex-shrink:0;width:103px;text-align:center">R$ 905.940,10</span></div>
<div class="c rg" style="left:679px;top:535px;width:103px;height:40px;justify-content:flex-start;color:#fff;font-size:13px;letter-spacing:-0.3px"><span style="display:block;flex-shrink:0;width:103px;text-align:center">R$ 905.940,10</span></div>
<div class="c rg" style="left:782px;top:535px;width:103px;height:40px;justify-content:flex-start;color:#fff;font-size:13px;letter-spacing:-0.3px"><span style="display:block;flex-shrink:0;width:103px;text-align:center">R$ 905.940,10</span></div>
<div class="c rg" style="left:885px;top:535px;width:103px;height:40px;justify-content:flex-start;color:#fff;font-size:13px;letter-spacing:-0.3px"><span style="display:block;flex-shrink:0;width:103px;text-align:center">R$ 905.940,10</span></div>
<div class="c rg" style="left:988px;top:535px;width:103px;height:40px;justify-content:flex-start;color:#fff;font-size:13px;letter-spacing:-0.3px"><span style="display:block;flex-shrink:0;width:103px;text-align:center">R$ 905.940,10</span></div>
<div class="c rg" style="left:1091px;top:535px;width:103px;height:40px;justify-content:flex-start;color:#fff;font-size:13px;letter-spacing:-0.3px"><span style="display:block;flex-shrink:0;width:103px;text-align:center">R$ 905.940,10</span></div>
<div class="c rg" style="left:1194px;top:535px;width:103px;height:40px;justify-content:flex-start;color:#fff;font-size:13px;letter-spacing:-0.3px"><span style="display:block;flex-shrink:0;width:103px;text-align:center">R$ 905.940,10</span></div>
<div class="c rg" style="left:1297px;top:535px;width:103px;height:40px;justify-content:flex-start;color:#fff;font-size:13px;letter-spacing:-0.3px"><span style="display:block;flex-shrink:0;width:103px;text-align:center">R$ 905.940,10</span></div>
<div class="c rg" style="left:1400px;top:535px;width:103px;height:40px;justify-content:flex-start;color:#fff;font-size:13px;letter-spacing:-0.3px"><span style="display:block;flex-shrink:0;width:103px;text-align:center">R$ 905.940,10</span></div>
<div class="c rg" style="left:1503px;top:535px;width:103px;height:40px;justify-content:flex-start;color:#fff;font-size:13px;letter-spacing:-0.3px"><span style="display:block;flex-shrink:0;width:103px;text-align:center">R$ 905.940,10</span></div>
<div class="c rg" style="left:1606px;top:535px;width:103px;height:40px;justify-content:flex-start;color:#fff;font-size:13px;letter-spacing:-0.3px"><span style="display:block;flex-shrink:0;width:103px;text-align:center">R$ 905.940,10</span></div>
<div class="c rg" style="left:1709px;top:535px;width:103px;height:40px;justify-content:flex-start;color:#fff;font-size:13px;letter-spacing:-0.3px"><span style="display:block;flex-shrink:0;width:103px;text-align:center">R$ 905.940,10</span></div>
<div class="c rg" style="left:1812px;top:535px;width:78px;height:40px;justify-content:flex-start;color:#fff;font-size:13px;letter-spacing:-0.3px"><span style="display:block;flex-shrink:0;width:103px;text-align:center">R$ 905.940,10</span></div>
<div style="left:41px;top:574px;width:205px;height:1px;background:#E3E3E3"></div>
<div style="left:257px;top:574px;width:1633px;height:1px;background:#D4D4D4"></div>
<div class="c" style="left:41px;top:575px;width:205px;height:40px;font-weight:bold;font-size:13.5px;color:#404040;letter-spacing:-0.3px;padding-top:1px">Custo Fixo</div>
<div style="left:258px;top:575px;width:1632px;height:40px;background:#C00000"></div>
<div class="c" style="left:258px;top:575px;width:112px;height:40px;color:#fff;font-size:13px;letter-spacing:-0.15px;-webkit-text-stroke:0.25px #fff">R$ 9.260.000,00</div>
<div class="c rg" style="left:370px;top:575px;width:103px;height:40px;justify-content:flex-start;color:#fff;font-size:13px;letter-spacing:-0.3px"><span style="display:block;flex-shrink:0;width:103px;text-align:center">R$ 463.000,00</span></div>
<div class="c rg" style="left:473px;top:575px;width:103px;height:40px;justify-content:flex-start;color:#fff;font-size:13px;letter-spacing:-0.3px"><span style="display:block;flex-shrink:0;width:103px;text-align:center">R$ 463.000,00</span></div>
<div class="c rg" style="left:576px;top:575px;width:103px;height:40px;justify-content:flex-start;color:#fff;font-size:13px;letter-spacing:-0.3px"><span style="display:block;flex-shrink:0;width:103px;text-align:center">R$ 463.000,00</span></div>
<div class="c rg" style="left:679px;top:575px;width:103px;height:40px;justify-content:flex-start;color:#fff;font-size:13px;letter-spacing:-0.3px"><span style="display:block;flex-shrink:0;width:103px;text-align:center">R$ 463.000,00</span></div>
<div class="c rg" style="left:782px;top:575px;width:103px;height:40px;justify-content:flex-start;color:#fff;font-size:13px;letter-spacing:-0.3px"><span style="display:block;flex-shrink:0;width:103px;text-align:center">R$ 463.000,00</span></div>
<div class="c rg" style="left:885px;top:575px;width:103px;height:40px;justify-content:flex-start;color:#fff;font-size:13px;letter-spacing:-0.3px"><span style="display:block;flex-shrink:0;width:103px;text-align:center">R$ 463.000,00</span></div>
<div class="c rg" style="left:988px;top:575px;width:103px;height:40px;justify-content:flex-start;color:#fff;font-size:13px;letter-spacing:-0.3px"><span style="display:block;flex-shrink:0;width:103px;text-align:center">R$ 463.000,00</span></div>
<div class="c rg" style="left:1091px;top:575px;width:103px;height:40px;justify-content:flex-start;color:#fff;font-size:13px;letter-spacing:-0.3px"><span style="display:block;flex-shrink:0;width:103px;text-align:center">R$ 463.000,00</span></div>
<div class="c rg" style="left:1194px;top:575px;width:103px;height:40px;justify-content:flex-start;color:#fff;font-size:13px;letter-spacing:-0.3px"><span style="display:block;flex-shrink:0;width:103px;text-align:center">R$ 463.000,00</span></div>
<div class="c rg" style="left:1297px;top:575px;width:103px;height:40px;justify-content:flex-start;color:#fff;font-size:13px;letter-spacing:-0.3px"><span style="display:block;flex-shrink:0;width:103px;text-align:center">R$ 463.000,00</span></div>
<div class="c rg" style="left:1400px;top:575px;width:103px;height:40px;justify-content:flex-start;color:#fff;font-size:13px;letter-spacing:-0.3px"><span style="display:block;flex-shrink:0;width:103px;text-align:center">R$ 463.000,00</span></div>
<div class="c rg" style="left:1503px;top:575px;width:103px;height:40px;justify-content:flex-start;color:#fff;font-size:13px;letter-spacing:-0.3px"><span style="display:block;flex-shrink:0;width:103px;text-align:center">R$ 463.000,00</span></div>
<div class="c rg" style="left:1606px;top:575px;width:103px;height:40px;justify-content:flex-start;color:#fff;font-size:13px;letter-spacing:-0.3px"><span style="display:block;flex-shrink:0;width:103px;text-align:center">R$ 463.000,00</span></div>
<div class="c rg" style="left:1709px;top:575px;width:103px;height:40px;justify-content:flex-start;color:#fff;font-size:13px;letter-spacing:-0.3px"><span style="display:block;flex-shrink:0;width:103px;text-align:center">R$ 463.000,00</span></div>
<div class="c rg" style="left:1812px;top:575px;width:78px;height:40px;justify-content:flex-start;color:#fff;font-size:13px;letter-spacing:-0.3px"><span style="display:block;flex-shrink:0;width:103px;text-align:center">R$ 463.000,00</span></div>
<div style="left:41px;top:614px;width:205px;height:1px;background:#E3E3E3"></div>
<div style="left:257px;top:614px;width:1633px;height:1px;background:#D4D4D4"></div>
<div class="c" style="left:41px;top:615px;width:205px;height:40px;font-weight:bold;font-size:13.5px;color:#404040;letter-spacing:-0.3px;padding-top:1px">Custo Variável</div>
<div style="left:258px;top:615px;width:1632px;height:40px;background:#C00000"></div>
<div class="c" style="left:258px;top:615px;width:112px;height:40px;color:#fff;font-size:13px;letter-spacing:-0.15px;-webkit-text-stroke:0.25px #fff">R$ 2.840.000,00</div>
<div class="c rg" style="left:370px;top:615px;width:103px;height:40px;justify-content:flex-start;color:#fff;font-size:13px;letter-spacing:-0.3px"><span style="display:block;flex-shrink:0;width:103px;text-align:center">R$ 188.000,00</span></div>
<div class="c rg" style="left:473px;top:615px;width:103px;height:40px;justify-content:flex-start;color:#fff;font-size:13px;letter-spacing:-0.3px"><span style="display:block;flex-shrink:0;width:103px;text-align:center">R$ 188.000,00</span></div>
<div class="c rg" style="left:576px;top:615px;width:103px;height:40px;justify-content:flex-start;color:#fff;font-size:13px;letter-spacing:-0.3px"><span style="display:block;flex-shrink:0;width:103px;text-align:center">R$ 188.000,00</span></div>
<div class="c rg" style="left:679px;top:615px;width:103px;height:40px;justify-content:flex-start;color:#fff;font-size:13px;letter-spacing:-0.3px"><span style="display:block;flex-shrink:0;width:103px;text-align:center">R$ 188.000,00</span></div>
<div class="c rg" style="left:782px;top:615px;width:103px;height:40px;justify-content:flex-start;color:#fff;font-size:13px;letter-spacing:-0.3px"><span style="display:block;flex-shrink:0;width:103px;text-align:center">R$ 188.000,00</span></div>
<div class="c rg" style="left:885px;top:615px;width:103px;height:40px;justify-content:flex-start;color:#fff;font-size:13px;letter-spacing:-0.3px"><span style="display:block;flex-shrink:0;width:103px;text-align:center">R$ 140.000,00</span></div>
<div class="c rg" style="left:988px;top:615px;width:103px;height:40px;justify-content:flex-start;color:#fff;font-size:13px;letter-spacing:-0.3px"><span style="display:block;flex-shrink:0;width:103px;text-align:center">R$ 140.000,00</span></div>
<div class="c rg" style="left:1091px;top:615px;width:103px;height:40px;justify-content:flex-start;color:#fff;font-size:13px;letter-spacing:-0.3px"><span style="display:block;flex-shrink:0;width:103px;text-align:center">R$ 140.000,00</span></div>
<div class="c rg" style="left:1194px;top:615px;width:103px;height:40px;justify-content:flex-start;color:#fff;font-size:13px;letter-spacing:-0.3px"><span style="display:block;flex-shrink:0;width:103px;text-align:center">R$ 140.000,00</span></div>
<div class="c rg" style="left:1297px;top:615px;width:103px;height:40px;justify-content:flex-start;color:#fff;font-size:13px;letter-spacing:-0.3px"><span style="display:block;flex-shrink:0;width:103px;text-align:center">R$ 140.000,00</span></div>
<div class="c rg" style="left:1400px;top:615px;width:103px;height:40px;justify-content:flex-start;color:#fff;font-size:13px;letter-spacing:-0.3px"><span style="display:block;flex-shrink:0;width:103px;text-align:center">R$ 120.000,00</span></div>
<div class="c rg" style="left:1503px;top:615px;width:103px;height:40px;justify-content:flex-start;color:#fff;font-size:13px;letter-spacing:-0.3px"><span style="display:block;flex-shrink:0;width:103px;text-align:center">R$ 120.000,00</span></div>
<div class="c rg" style="left:1606px;top:615px;width:103px;height:40px;justify-content:flex-start;color:#fff;font-size:13px;letter-spacing:-0.3px"><span style="display:block;flex-shrink:0;width:103px;text-align:center">R$ 120.000,00</span></div>
<div class="c rg" style="left:1709px;top:615px;width:103px;height:40px;justify-content:flex-start;color:#fff;font-size:13px;letter-spacing:-0.3px"><span style="display:block;flex-shrink:0;width:103px;text-align:center">R$ 120.000,00</span></div>
<div class="c rg" style="left:1812px;top:615px;width:78px;height:40px;justify-content:flex-start;color:#fff;font-size:13px;letter-spacing:-0.3px"><span style="display:block;flex-shrink:0;width:103px;text-align:center">R$ 120.000,00</span></div>
<div style="left:41px;top:654px;width:205px;height:1px;background:#E3E3E3"></div>
<div style="left:257px;top:654px;width:1633px;height:1px;background:#D4D4D4"></div>
<div class="c" style="left:41px;top:655px;width:205px;height:40px;font-weight:bold;font-size:13.5px;color:#404040;letter-spacing:-0.3px;padding-top:1px">Despesas totais</div>
<div style="left:258px;top:655px;width:1632px;height:40px;background:#C00000"></div>
<div class="c" style="left:258px;top:655px;width:112px;height:40px;color:#fff;font-size:13px;letter-spacing:-0.15px;-webkit-text-stroke:0.25px #fff">R$ 10.285.000,00</div>
<div class="c rg" style="left:370px;top:655px;width:103px;height:40px;justify-content:flex-start;color:#fff;font-size:13px;letter-spacing:-0.3px"><span style="display:block;flex-shrink:0;width:103px;text-align:center">R$ 553.350,00</span></div>
<div class="c rg" style="left:473px;top:655px;width:103px;height:40px;justify-content:flex-start;color:#fff;font-size:13px;letter-spacing:-0.3px"><span style="display:block;flex-shrink:0;width:103px;text-align:center">R$ 553.350,00</span></div>
<div class="c rg" style="left:576px;top:655px;width:103px;height:40px;justify-content:flex-start;color:#fff;font-size:13px;letter-spacing:-0.3px"><span style="display:block;flex-shrink:0;width:103px;text-align:center">R$ 553.350,00</span></div>
<div class="c rg" style="left:679px;top:655px;width:103px;height:40px;justify-content:flex-start;color:#fff;font-size:13px;letter-spacing:-0.3px"><span style="display:block;flex-shrink:0;width:103px;text-align:center">R$ 553.350,00</span></div>
<div class="c rg" style="left:782px;top:655px;width:103px;height:40px;justify-content:flex-start;color:#fff;font-size:13px;letter-spacing:-0.3px"><span style="display:block;flex-shrink:0;width:103px;text-align:center">R$ 553.350,00</span></div>
<div class="c rg" style="left:885px;top:655px;width:103px;height:40px;justify-content:flex-start;color:#fff;font-size:13px;letter-spacing:-0.3px"><span style="display:block;flex-shrink:0;width:103px;text-align:center">R$ 512.550,00</span></div>
<div class="c rg" style="left:988px;top:655px;width:103px;height:40px;justify-content:flex-start;color:#fff;font-size:13px;letter-spacing:-0.3px"><span style="display:block;flex-shrink:0;width:103px;text-align:center">R$ 512.550,00</span></div>
<div class="c rg" style="left:1091px;top:655px;width:103px;height:40px;justify-content:flex-start;color:#fff;font-size:13px;letter-spacing:-0.3px"><span style="display:block;flex-shrink:0;width:103px;text-align:center">R$ 512.550,00</span></div>
<div class="c rg" style="left:1194px;top:655px;width:103px;height:40px;justify-content:flex-start;color:#fff;font-size:13px;letter-spacing:-0.3px"><span style="display:block;flex-shrink:0;width:103px;text-align:center">R$ 512.550,00</span></div>
<div class="c rg" style="left:1297px;top:655px;width:103px;height:40px;justify-content:flex-start;color:#fff;font-size:13px;letter-spacing:-0.3px"><span style="display:block;flex-shrink:0;width:103px;text-align:center">R$ 512.550,00</span></div>
<div class="c rg" style="left:1400px;top:655px;width:103px;height:40px;justify-content:flex-start;color:#fff;font-size:13px;letter-spacing:-0.3px"><span style="display:block;flex-shrink:0;width:103px;text-align:center">R$ 495.550,00</span></div>
<div class="c rg" style="left:1503px;top:655px;width:103px;height:40px;justify-content:flex-start;color:#fff;font-size:13px;letter-spacing:-0.3px"><span style="display:block;flex-shrink:0;width:103px;text-align:center">R$ 495.550,00</span></div>
<div class="c rg" style="left:1606px;top:655px;width:103px;height:40px;justify-content:flex-start;color:#fff;font-size:13px;letter-spacing:-0.3px"><span style="display:block;flex-shrink:0;width:103px;text-align:center">R$ 495.550,00</span></div>
<div class="c rg" style="left:1709px;top:655px;width:103px;height:40px;justify-content:flex-start;color:#fff;font-size:13px;letter-spacing:-0.3px"><span style="display:block;flex-shrink:0;width:103px;text-align:center">R$ 495.550,00</span></div>
<div class="c rg" style="left:1812px;top:655px;width:78px;height:40px;justify-content:flex-start;color:#fff;font-size:13px;letter-spacing:-0.3px"><span style="display:block;flex-shrink:0;width:103px;text-align:center">R$ 495.550,00</span></div>
<div style="left:41px;top:694px;width:205px;height:1px;background:#E3E3E3"></div>
<div style="left:257px;top:694px;width:1633px;height:1px;background:#D4D4D4"></div>
<div class="c" style="left:41px;top:695px;width:205px;height:40px;font-weight:bold;font-size:13.5px;color:#404040;letter-spacing:-0.3px;padding-top:1px">Lucro / Prejuízo</div>
<div style="left:258px;top:695px;width:1632px;height:40px;background:#009C56"></div>
<div class="c" style="left:258px;top:695px;width:112px;height:40px;color:#fff;font-size:13px;letter-spacing:-0.15px;-webkit-text-stroke:0.25px #fff">R$ 7.833.802,07</div>
<div class="c rg" style="left:370px;top:695px;width:103px;height:40px;justify-content:flex-start;color:#fff;font-size:13px;letter-spacing:-0.3px"><span style="display:block;flex-shrink:0;width:103px;text-align:center">R$ 352.590,10</span></div>
<div class="c rg" style="left:473px;top:695px;width:103px;height:40px;justify-content:flex-start;color:#fff;font-size:13px;letter-spacing:-0.3px"><span style="display:block;flex-shrink:0;width:103px;text-align:center">R$ 352.590,10</span></div>
<div class="c rg" style="left:576px;top:695px;width:103px;height:40px;justify-content:flex-start;color:#fff;font-size:13px;letter-spacing:-0.3px"><span style="display:block;flex-shrink:0;width:103px;text-align:center">R$ 352.590,10</span></div>
<div class="c rg" style="left:679px;top:695px;width:103px;height:40px;justify-content:flex-start;color:#fff;font-size:13px;letter-spacing:-0.3px"><span style="display:block;flex-shrink:0;width:103px;text-align:center">R$ 352.590,10</span></div>
<div class="c rg" style="left:782px;top:695px;width:103px;height:40px;justify-content:flex-start;color:#fff;font-size:13px;letter-spacing:-0.3px"><span style="display:block;flex-shrink:0;width:103px;text-align:center">R$ 352.590,10</span></div>
<div class="c rg" style="left:885px;top:695px;width:103px;height:40px;justify-content:flex-start;color:#fff;font-size:13px;letter-spacing:-0.3px"><span style="display:block;flex-shrink:0;width:103px;text-align:center">R$ 393.390,10</span></div>
<div class="c rg" style="left:988px;top:695px;width:103px;height:40px;justify-content:flex-start;color:#fff;font-size:13px;letter-spacing:-0.3px"><span style="display:block;flex-shrink:0;width:103px;text-align:center">R$ 393.390,10</span></div>
<div class="c rg" style="left:1091px;top:695px;width:103px;height:40px;justify-content:flex-start;color:#fff;font-size:13px;letter-spacing:-0.3px"><span style="display:block;flex-shrink:0;width:103px;text-align:center">R$ 393.390,10</span></div>
<div class="c rg" style="left:1194px;top:695px;width:103px;height:40px;justify-content:flex-start;color:#fff;font-size:13px;letter-spacing:-0.3px"><span style="display:block;flex-shrink:0;width:103px;text-align:center">R$ 393.390,10</span></div>
<div class="c rg" style="left:1297px;top:695px;width:103px;height:40px;justify-content:flex-start;color:#fff;font-size:13px;letter-spacing:-0.3px"><span style="display:block;flex-shrink:0;width:103px;text-align:center">R$ 393.390,10</span></div>
<div class="c rg" style="left:1400px;top:695px;width:103px;height:40px;justify-content:flex-start;color:#fff;font-size:13px;letter-spacing:-0.3px"><span style="display:block;flex-shrink:0;width:103px;text-align:center">R$ 410.390,10</span></div>
<div class="c rg" style="left:1503px;top:695px;width:103px;height:40px;justify-content:flex-start;color:#fff;font-size:13px;letter-spacing:-0.3px"><span style="display:block;flex-shrink:0;width:103px;text-align:center">R$ 410.390,10</span></div>
<div class="c rg" style="left:1606px;top:695px;width:103px;height:40px;justify-content:flex-start;color:#fff;font-size:13px;letter-spacing:-0.3px"><span style="display:block;flex-shrink:0;width:103px;text-align:center">R$ 410.390,10</span></div>
<div class="c rg" style="left:1709px;top:695px;width:103px;height:40px;justify-content:flex-start;color:#fff;font-size:13px;letter-spacing:-0.3px"><span style="display:block;flex-shrink:0;width:103px;text-align:center">R$ 410.390,10</span></div>
<div class="c rg" style="left:1812px;top:695px;width:78px;height:40px;justify-content:flex-start;color:#fff;font-size:13px;letter-spacing:-0.3px"><span style="display:block;flex-shrink:0;width:103px;text-align:center">R$ 410.390,10</span></div>
<div style="left:41px;top:734px;width:205px;height:1px;background:#E3E3E3"></div>
<div style="left:257px;top:734px;width:1633px;height:1px;background:#D4D4D4"></div>
<div class="c" style="left:41px;top:735px;width:205px;height:40px;font-weight:bold;font-size:13.5px;color:#404040;letter-spacing:-0.3px;padding-top:1px">Acumulado</div>
<div style="left:258px;top:735px;width:1632px;height:40px;background:#FFC218"></div>
<div class="c" style="left:258px;top:735px;width:112px;height:40px;color:#FFFAEA;font-size:13px;letter-spacing:-0.15px;-webkit-text-stroke:0.25px #FFFAEA">R$ 5.778.202,07</div>
<div class="c rg" style="left:370px;top:735px;width:103px;height:40px;justify-content:flex-start;color:#FFFAEA;font-size:13px;letter-spacing:-0.3px"><span style="display:block;flex-shrink:0;width:103px;text-align:center">R$ 339.090,10</span></div>
<div class="c rg" style="left:473px;top:735px;width:103px;height:40px;justify-content:flex-start;color:#FFFAEA;font-size:13px;letter-spacing:-0.3px"><span style="display:block;flex-shrink:0;width:103px;text-align:center">R$ 671.880,21</span></div>
<div class="c rg" style="left:576px;top:735px;width:103px;height:40px;justify-content:flex-start;color:#FFFAEA;font-size:13px;letter-spacing:-0.3px"><span style="display:block;flex-shrink:0;width:103px;text-align:center">R$ 998.370,31</span></div>
<div class="c rg" style="left:679px;top:735px;width:103px;height:40px;justify-content:flex-start;color:#FFFAEA;font-size:13px;letter-spacing:-0.3px"><span style="display:block;flex-shrink:0;width:103px;text-align:center">R$ 1.318.560,41</span></div>
<div class="c rg" style="left:782px;top:735px;width:103px;height:40px;justify-content:flex-start;color:#FFFAEA;font-size:13px;letter-spacing:-0.3px"><span style="display:block;flex-shrink:0;width:103px;text-align:center">R$ 1.582.950,52</span></div>
<div class="c rg" style="left:885px;top:735px;width:103px;height:40px;justify-content:flex-start;color:#FFFAEA;font-size:13px;letter-spacing:-0.3px"><span style="display:block;flex-shrink:0;width:103px;text-align:center">R$ 1.931.340,62</span></div>
<div class="c rg" style="left:988px;top:735px;width:103px;height:40px;justify-content:flex-start;color:#FFFAEA;font-size:13px;letter-spacing:-0.3px"><span style="display:block;flex-shrink:0;width:103px;text-align:center">R$ 2.273.430,72</span></div>
<div class="c rg" style="left:1091px;top:735px;width:103px;height:40px;justify-content:flex-start;color:#FFFAEA;font-size:13px;letter-spacing:-0.3px"><span style="display:block;flex-shrink:0;width:103px;text-align:center">R$ 2.609.220,83</span></div>
<div class="c rg" style="left:1194px;top:735px;width:103px;height:40px;justify-content:flex-start;color:#FFFAEA;font-size:13px;letter-spacing:-0.3px"><span style="display:block;flex-shrink:0;width:103px;text-align:center">R$ 2.938.710,93</span></div>
<div class="c rg" style="left:1297px;top:735px;width:103px;height:40px;justify-content:flex-start;color:#FFFAEA;font-size:13px;letter-spacing:-0.3px"><span style="display:block;flex-shrink:0;width:103px;text-align:center">R$ 3.131.401,04</span></div>
<div class="c rg" style="left:1400px;top:735px;width:103px;height:40px;justify-content:flex-start;color:#FFFAEA;font-size:13px;letter-spacing:-0.3px"><span style="display:block;flex-shrink:0;width:103px;text-align:center">R$ 3.465.291,14</span></div>
<div class="c rg" style="left:1503px;top:735px;width:103px;height:40px;justify-content:flex-start;color:#FFFAEA;font-size:13px;letter-spacing:-0.3px"><span style="display:block;flex-shrink:0;width:103px;text-align:center">R$ 3.792.881,24</span></div>
<div class="c rg" style="left:1606px;top:735px;width:103px;height:40px;justify-content:flex-start;color:#FFFAEA;font-size:13px;letter-spacing:-0.3px"><span style="display:block;flex-shrink:0;width:103px;text-align:center">R$ 4.114.171,35</span></div>
<div class="c rg" style="left:1709px;top:735px;width:103px;height:40px;justify-content:flex-start;color:#FFFAEA;font-size:13px;letter-spacing:-0.3px"><span style="display:block;flex-shrink:0;width:103px;text-align:center">R$ 4.429.161,45</span></div>
<div class="c rg" style="left:1812px;top:735px;width:78px;height:40px;justify-content:flex-start;color:#FFFAEA;font-size:13px;letter-spacing:-0.3px"><span style="display:block;flex-shrink:0;width:103px;text-align:center">R$ 4.602.851,55</span></div>
<div style="left:41px;top:774px;width:205px;height:1px;background:#E3E3E3"></div>
<div style="left:257px;top:774px;width:1633px;height:1px;background:#D4D4D4"></div>
<div class="c" style="left:41px;top:775px;width:205px;height:40px;font-weight:bold;font-size:13.5px;color:#404040;letter-spacing:-0.3px;padding-top:1px">Margem de Contribuição (%)</div>
<div style="left:258px;top:775px;width:1632px;height:40px;background:#fff"></div>
<div style="left:258px;top:775px;width:112px;height:40px;background:#F2F2F2"></div>
<div class="c" style="left:258px;top:775px;width:112px;height:40px;color:#111;font-size:13px;letter-spacing:-0.15px;-webkit-text-stroke:0.25px #111">84,33%</div>
<div class="c rg" style="left:370px;top:775px;width:103px;height:40px;justify-content:flex-start;color:#111;font-size:13px;letter-spacing:-0.3px"><span style="display:block;flex-shrink:0;width:103px;text-align:center">79,25%</span></div>
<div class="c rg" style="left:473px;top:775px;width:103px;height:40px;justify-content:flex-start;color:#111;font-size:13px;letter-spacing:-0.3px"><span style="display:block;flex-shrink:0;width:103px;text-align:center">79,25%</span></div>
<div class="c rg" style="left:576px;top:775px;width:103px;height:40px;justify-content:flex-start;color:#111;font-size:13px;letter-spacing:-0.3px"><span style="display:block;flex-shrink:0;width:103px;text-align:center">79,25%</span></div>
<div class="c rg" style="left:679px;top:775px;width:103px;height:40px;justify-content:flex-start;color:#111;font-size:13px;letter-spacing:-0.3px"><span style="display:block;flex-shrink:0;width:103px;text-align:center">79,25%</span></div>
<div class="c rg" style="left:782px;top:775px;width:103px;height:40px;justify-content:flex-start;color:#111;font-size:13px;letter-spacing:-0.3px"><span style="display:block;flex-shrink:0;width:103px;text-align:center">79,25%</span></div>
<div class="c rg" style="left:885px;top:775px;width:103px;height:40px;justify-content:flex-start;color:#111;font-size:13px;letter-spacing:-0.3px"><span style="display:block;flex-shrink:0;width:103px;text-align:center">84,55%</span></div>
<div class="c rg" style="left:988px;top:775px;width:103px;height:40px;justify-content:flex-start;color:#111;font-size:13px;letter-spacing:-0.3px"><span style="display:block;flex-shrink:0;width:103px;text-align:center">84,55%</span></div>
<div class="c rg" style="left:1091px;top:775px;width:103px;height:40px;justify-content:flex-start;color:#111;font-size:13px;letter-spacing:-0.3px"><span style="display:block;flex-shrink:0;width:103px;text-align:center">84,55%</span></div>
<div class="c rg" style="left:1194px;top:775px;width:103px;height:40px;justify-content:flex-start;color:#111;font-size:13px;letter-spacing:-0.3px"><span style="display:block;flex-shrink:0;width:103px;text-align:center">84,55%</span></div>
<div class="c rg" style="left:1297px;top:775px;width:103px;height:40px;justify-content:flex-start;color:#111;font-size:13px;letter-spacing:-0.3px"><span style="display:block;flex-shrink:0;width:103px;text-align:center">84,55%</span></div>
<div class="c rg" style="left:1400px;top:775px;width:103px;height:40px;justify-content:flex-start;color:#111;font-size:13px;letter-spacing:-0.3px"><span style="display:block;flex-shrink:0;width:103px;text-align:center">86,75%</span></div>
<div class="c rg" style="left:1503px;top:775px;width:103px;height:40px;justify-content:flex-start;color:#111;font-size:13px;letter-spacing:-0.3px"><span style="display:block;flex-shrink:0;width:103px;text-align:center">86,75%</span></div>
<div class="c rg" style="left:1606px;top:775px;width:103px;height:40px;justify-content:flex-start;color:#111;font-size:13px;letter-spacing:-0.3px"><span style="display:block;flex-shrink:0;width:103px;text-align:center">86,75%</span></div>
<div class="c rg" style="left:1709px;top:775px;width:103px;height:40px;justify-content:flex-start;color:#111;font-size:13px;letter-spacing:-0.3px"><span style="display:block;flex-shrink:0;width:103px;text-align:center">86,75%</span></div>
<div class="c rg" style="left:1812px;top:775px;width:78px;height:40px;justify-content:flex-start;color:#111;font-size:13px;letter-spacing:-0.3px"><span style="display:block;flex-shrink:0;width:103px;text-align:center">86,75%</span></div>
<div style="left:41px;top:814px;width:205px;height:1px;background:#E3E3E3"></div>
<div style="left:257px;top:814px;width:1633px;height:1px;background:#D4D4D4"></div>
<div class="c" style="left:41px;top:815px;width:205px;height:40px;font-weight:bold;font-size:13.5px;color:#404040;letter-spacing:-0.3px;padding-top:1px">Investimentos Futuros</div>
<div style="left:258px;top:815px;width:1632px;height:40px;background:#fff"></div>
<div style="left:258px;top:815px;width:112px;height:40px;background:#F2F2F2"></div>
<div class="c" style="left:258px;top:815px;width:112px;height:40px;color:#111;font-size:13px;letter-spacing:-0.15px;-webkit-text-stroke:0.25px #111">R$ 2.055.600,00</div>
<div class="c rg" style="left:370px;top:815px;width:103px;height:40px;justify-content:flex-start;color:#111;font-size:13px;letter-spacing:-0.3px"><span style="display:block;flex-shrink:0;width:103px;text-align:center">R$ 13.500,00</span></div>
<div class="c rg" style="left:473px;top:815px;width:103px;height:40px;justify-content:flex-start;color:#111;font-size:13px;letter-spacing:-0.3px"><span style="display:block;flex-shrink:0;width:103px;text-align:center">R$ 19.800,00</span></div>
<div class="c rg" style="left:576px;top:815px;width:103px;height:40px;justify-content:flex-start;color:#111;font-size:13px;letter-spacing:-0.3px"><span style="display:block;flex-shrink:0;width:103px;text-align:center">R$ 26.100,00</span></div>
<div class="c rg" style="left:679px;top:815px;width:103px;height:40px;justify-content:flex-start;color:#111;font-size:13px;letter-spacing:-0.3px"><span style="display:block;flex-shrink:0;width:103px;text-align:center">R$ 32.400,00</span></div>
<div class="c rg" style="left:782px;top:815px;width:103px;height:40px;justify-content:flex-start;color:#111;font-size:13px;letter-spacing:-0.3px"><span style="display:block;flex-shrink:0;width:103px;text-align:center">R$ 88.200,00</span></div>
<div class="c rg" style="left:885px;top:815px;width:103px;height:40px;justify-content:flex-start;color:#111;font-size:13px;letter-spacing:-0.3px"><span style="display:block;flex-shrink:0;width:103px;text-align:center">R$ 45.000,00</span></div>
<div class="c rg" style="left:988px;top:815px;width:103px;height:40px;justify-content:flex-start;color:#111;font-size:13px;letter-spacing:-0.3px"><span style="display:block;flex-shrink:0;width:103px;text-align:center">R$ 51.300,00</span></div>
<div class="c rg" style="left:1091px;top:815px;width:103px;height:40px;justify-content:flex-start;color:#111;font-size:13px;letter-spacing:-0.3px"><span style="display:block;flex-shrink:0;width:103px;text-align:center">R$ 57.600,00</span></div>
<div class="c rg" style="left:1194px;top:815px;width:103px;height:40px;justify-content:flex-start;color:#111;font-size:13px;letter-spacing:-0.3px"><span style="display:block;flex-shrink:0;width:103px;text-align:center">R$ 63.900,00</span></div>
<div class="c rg" style="left:1297px;top:815px;width:103px;height:40px;justify-content:flex-start;color:#111;font-size:13px;letter-spacing:-0.3px"><span style="display:block;flex-shrink:0;width:103px;text-align:center">R$ 200.700,00</span></div>
<div class="c rg" style="left:1400px;top:815px;width:103px;height:40px;justify-content:flex-start;color:#111;font-size:13px;letter-spacing:-0.3px"><span style="display:block;flex-shrink:0;width:103px;text-align:center">R$ 76.500,00</span></div>
<div class="c rg" style="left:1503px;top:815px;width:103px;height:40px;justify-content:flex-start;color:#111;font-size:13px;letter-spacing:-0.3px"><span style="display:block;flex-shrink:0;width:103px;text-align:center">R$ 82.800,00</span></div>
<div class="c rg" style="left:1606px;top:815px;width:103px;height:40px;justify-content:flex-start;color:#111;font-size:13px;letter-spacing:-0.3px"><span style="display:block;flex-shrink:0;width:103px;text-align:center">R$ 89.100,00</span></div>
<div class="c rg" style="left:1709px;top:815px;width:103px;height:40px;justify-content:flex-start;color:#111;font-size:13px;letter-spacing:-0.3px"><span style="display:block;flex-shrink:0;width:103px;text-align:center">R$ 95.400,00</span></div>
<div class="c rg" style="left:1812px;top:815px;width:78px;height:40px;justify-content:flex-start;color:#111;font-size:13px;letter-spacing:-0.3px"><span style="display:block;flex-shrink:0;width:103px;text-align:center">R$ 236.700,00</span></div>
<div style="left:41px;top:854px;width:205px;height:1px;background:#E3E3E3"></div>
<div style="left:257px;top:854px;width:1633px;height:1px;background:#D4D4D4"></div>
<div class="c" style="left:41px;top:855px;width:205px;height:40px;font-weight:bold;font-size:13.5px;color:#404040;letter-spacing:-0.3px;padding-top:1px">Depreciação Futura</div>
<div style="left:258px;top:855px;width:1632px;height:40px;background:#fff"></div>
<div style="left:258px;top:855px;width:112px;height:40px;background:#F2F2F2"></div>
<div class="c" style="left:258px;top:855px;width:112px;height:40px;color:#111;font-size:13px;letter-spacing:-0.15px;-webkit-text-stroke:0.25px #111">R$ 0,00</div>
<div class="c rg" style="left:370px;top:855px;width:103px;height:40px;justify-content:flex-start;color:#111;font-size:13px;letter-spacing:-0.3px"><span style="display:block;flex-shrink:0;width:103px;text-align:center">R$ 0,00</span></div>
<div class="c rg" style="left:473px;top:855px;width:103px;height:40px;justify-content:flex-start;color:#111;font-size:13px;letter-spacing:-0.3px"><span style="display:block;flex-shrink:0;width:103px;text-align:center">R$ 0,00</span></div>
<div class="c rg" style="left:576px;top:855px;width:103px;height:40px;justify-content:flex-start;color:#111;font-size:13px;letter-spacing:-0.3px"><span style="display:block;flex-shrink:0;width:103px;text-align:center">R$ 0,00</span></div>
<div class="c rg" style="left:679px;top:855px;width:103px;height:40px;justify-content:flex-start;color:#111;font-size:13px;letter-spacing:-0.3px"><span style="display:block;flex-shrink:0;width:103px;text-align:center">R$ 0,00</span></div>
<div class="c rg" style="left:782px;top:855px;width:103px;height:40px;justify-content:flex-start;color:#111;font-size:13px;letter-spacing:-0.3px"><span style="display:block;flex-shrink:0;width:103px;text-align:center">R$ 0,00</span></div>
<div class="c rg" style="left:885px;top:855px;width:103px;height:40px;justify-content:flex-start;color:#111;font-size:13px;letter-spacing:-0.3px"><span style="display:block;flex-shrink:0;width:103px;text-align:center">R$ 0,00</span></div>
<div class="c rg" style="left:988px;top:855px;width:103px;height:40px;justify-content:flex-start;color:#111;font-size:13px;letter-spacing:-0.3px"><span style="display:block;flex-shrink:0;width:103px;text-align:center">R$ 0,00</span></div>
<div class="c rg" style="left:1091px;top:855px;width:103px;height:40px;justify-content:flex-start;color:#111;font-size:13px;letter-spacing:-0.3px"><span style="display:block;flex-shrink:0;width:103px;text-align:center">R$ 0,00</span></div>
<div class="c rg" style="left:1194px;top:855px;width:103px;height:40px;justify-content:flex-start;color:#111;font-size:13px;letter-spacing:-0.3px"><span style="display:block;flex-shrink:0;width:103px;text-align:center">R$ 0,00</span></div>
<div class="c rg" style="left:1297px;top:855px;width:103px;height:40px;justify-content:flex-start;color:#111;font-size:13px;letter-spacing:-0.3px"><span style="display:block;flex-shrink:0;width:103px;text-align:center">R$ 0,00</span></div>
<div class="c rg" style="left:1400px;top:855px;width:103px;height:40px;justify-content:flex-start;color:#111;font-size:13px;letter-spacing:-0.3px"><span style="display:block;flex-shrink:0;width:103px;text-align:center">R$ 0,00</span></div>
<div class="c rg" style="left:1503px;top:855px;width:103px;height:40px;justify-content:flex-start;color:#111;font-size:13px;letter-spacing:-0.3px"><span style="display:block;flex-shrink:0;width:103px;text-align:center">R$ 0,00</span></div>
<div class="c rg" style="left:1606px;top:855px;width:103px;height:40px;justify-content:flex-start;color:#111;font-size:13px;letter-spacing:-0.3px"><span style="display:block;flex-shrink:0;width:103px;text-align:center">R$ 0,00</span></div>
<div class="c rg" style="left:1709px;top:855px;width:103px;height:40px;justify-content:flex-start;color:#111;font-size:13px;letter-spacing:-0.3px"><span style="display:block;flex-shrink:0;width:103px;text-align:center">R$ 0,00</span></div>
<div class="c rg" style="left:1812px;top:855px;width:78px;height:40px;justify-content:flex-start;color:#111;font-size:13px;letter-spacing:-0.3px"><span style="display:block;flex-shrink:0;width:103px;text-align:center">R$ 0,00</span></div>
<div style="left:41px;top:894px;width:205px;height:1px;background:#E3E3E3"></div>
<div style="left:257px;top:894px;width:1633px;height:1px;background:#D4D4D4"></div>
<div class="c" style="left:41px;top:895px;width:205px;height:40px;font-weight:bold;font-size:13.5px;color:#404040;letter-spacing:-0.3px;padding-top:1px">Lucratividade</div>
<div style="left:258px;top:895px;width:1632px;height:40px;background:#fff"></div>
<div style="left:258px;top:895px;width:112px;height:40px;background:#F2F2F2"></div>
<div class="c" style="left:258px;top:895px;width:112px;height:40px;color:#111;font-size:13px;letter-spacing:-0.15px;-webkit-text-stroke:0.25px #111">43,24%</div>
<div class="c rg" style="left:370px;top:895px;width:103px;height:40px;justify-content:flex-start;color:#111;font-size:13px;letter-spacing:-0.3px"><span style="display:block;flex-shrink:0;width:103px;text-align:center">38,92% aa</span></div>
<div class="c rg" style="left:473px;top:895px;width:103px;height:40px;justify-content:flex-start;color:#111;font-size:13px;letter-spacing:-0.3px"><span style="display:block;flex-shrink:0;width:103px;text-align:center">38,92% aa</span></div>
<div class="c rg" style="left:576px;top:895px;width:103px;height:40px;justify-content:flex-start;color:#111;font-size:13px;letter-spacing:-0.3px"><span style="display:block;flex-shrink:0;width:103px;text-align:center">38,92% aa</span></div>
<div class="c rg" style="left:679px;top:895px;width:103px;height:40px;justify-content:flex-start;color:#111;font-size:13px;letter-spacing:-0.3px"><span style="display:block;flex-shrink:0;width:103px;text-align:center">38,92% aa</span></div>
<div class="c rg" style="left:782px;top:895px;width:103px;height:40px;justify-content:flex-start;color:#111;font-size:13px;letter-spacing:-0.3px"><span style="display:block;flex-shrink:0;width:103px;text-align:center">38,92% aa</span></div>
<div class="c rg" style="left:885px;top:895px;width:103px;height:40px;justify-content:flex-start;color:#111;font-size:13px;letter-spacing:-0.3px"><span style="display:block;flex-shrink:0;width:103px;text-align:center">43,42% aa</span></div>
<div class="c rg" style="left:988px;top:895px;width:103px;height:40px;justify-content:flex-start;color:#111;font-size:13px;letter-spacing:-0.3px"><span style="display:block;flex-shrink:0;width:103px;text-align:center">43,42% aa</span></div>
<div class="c rg" style="left:1091px;top:895px;width:103px;height:40px;justify-content:flex-start;color:#111;font-size:13px;letter-spacing:-0.3px"><span style="display:block;flex-shrink:0;width:103px;text-align:center">43,42% aa</span></div>
<div class="c rg" style="left:1194px;top:895px;width:103px;height:40px;justify-content:flex-start;color:#111;font-size:13px;letter-spacing:-0.3px"><span style="display:block;flex-shrink:0;width:103px;text-align:center">43,42% aa</span></div>
<div class="c rg" style="left:1297px;top:895px;width:103px;height:40px;justify-content:flex-start;color:#111;font-size:13px;letter-spacing:-0.3px"><span style="display:block;flex-shrink:0;width:103px;text-align:center">43,42% aa</span></div>
<div class="c rg" style="left:1400px;top:895px;width:103px;height:40px;justify-content:flex-start;color:#111;font-size:13px;letter-spacing:-0.3px"><span style="display:block;flex-shrink:0;width:103px;text-align:center">45,30% aa</span></div>
<div class="c rg" style="left:1503px;top:895px;width:103px;height:40px;justify-content:flex-start;color:#111;font-size:13px;letter-spacing:-0.3px"><span style="display:block;flex-shrink:0;width:103px;text-align:center">45,30% aa</span></div>
<div class="c rg" style="left:1606px;top:895px;width:103px;height:40px;justify-content:flex-start;color:#111;font-size:13px;letter-spacing:-0.3px"><span style="display:block;flex-shrink:0;width:103px;text-align:center">45,30% aa</span></div>
<div class="c rg" style="left:1709px;top:895px;width:103px;height:40px;justify-content:flex-start;color:#111;font-size:13px;letter-spacing:-0.3px"><span style="display:block;flex-shrink:0;width:103px;text-align:center">45,30% aa</span></div>
<div class="c rg" style="left:1812px;top:895px;width:78px;height:40px;justify-content:flex-start;color:#111;font-size:13px;letter-spacing:-0.3px"><span style="display:block;flex-shrink:0;width:103px;text-align:center">45,30% aa</span></div>
<div style="left:41px;top:934px;width:205px;height:1px;background:#E3E3E3"></div>
<div style="left:257px;top:934px;width:1633px;height:1px;background:#D4D4D4"></div>
<div class="c" style="left:41px;top:935px;width:205px;height:40px;font-weight:bold;font-size:13.5px;color:#404040;letter-spacing:-0.3px;padding-top:1px">Rentabilidade</div>
<div style="left:258px;top:935px;width:1632px;height:40px;background:#fff"></div>
<div style="left:258px;top:935px;width:112px;height:40px;background:#F2F2F2"></div>
<div class="c" style="left:258px;top:935px;width:112px;height:40px;color:#111;font-size:13px;letter-spacing:-0.15px;-webkit-text-stroke:0.25px #111">99,41%</div>
<div class="c rg" style="left:370px;top:935px;width:103px;height:40px;justify-content:flex-start;color:#111;font-size:13px;letter-spacing:-0.3px"><span style="display:block;flex-shrink:0;width:103px;text-align:center">89,49% aa</span></div>
<div class="c rg" style="left:473px;top:935px;width:103px;height:40px;justify-content:flex-start;color:#111;font-size:13px;letter-spacing:-0.3px"><span style="display:block;flex-shrink:0;width:103px;text-align:center">89,49% aa</span></div>
<div class="c rg" style="left:576px;top:935px;width:103px;height:40px;justify-content:flex-start;color:#111;font-size:13px;letter-spacing:-0.3px"><span style="display:block;flex-shrink:0;width:103px;text-align:center">89,49% aa</span></div>
<div class="c rg" style="left:679px;top:935px;width:103px;height:40px;justify-content:flex-start;color:#111;font-size:13px;letter-spacing:-0.3px"><span style="display:block;flex-shrink:0;width:103px;text-align:center">89,49% aa</span></div>
<div class="c rg" style="left:782px;top:935px;width:103px;height:40px;justify-content:flex-start;color:#111;font-size:13px;letter-spacing:-0.3px"><span style="display:block;flex-shrink:0;width:103px;text-align:center">89,49% aa</span></div>
<div class="c rg" style="left:885px;top:935px;width:103px;height:40px;justify-content:flex-start;color:#111;font-size:13px;letter-spacing:-0.3px"><span style="display:block;flex-shrink:0;width:103px;text-align:center">99,85% aa</span></div>
<div class="c rg" style="left:988px;top:935px;width:103px;height:40px;justify-content:flex-start;color:#111;font-size:13px;letter-spacing:-0.3px"><span style="display:block;flex-shrink:0;width:103px;text-align:center">99,85% aa</span></div>
<div class="c rg" style="left:1091px;top:935px;width:103px;height:40px;justify-content:flex-start;color:#111;font-size:13px;letter-spacing:-0.3px"><span style="display:block;flex-shrink:0;width:103px;text-align:center">99,85% aa</span></div>
<div class="c rg" style="left:1194px;top:935px;width:103px;height:40px;justify-content:flex-start;color:#111;font-size:13px;letter-spacing:-0.3px"><span style="display:block;flex-shrink:0;width:103px;text-align:center">99,85% aa</span></div>
<div class="c rg" style="left:1297px;top:935px;width:103px;height:40px;justify-content:flex-start;color:#111;font-size:13px;letter-spacing:-0.3px"><span style="display:block;flex-shrink:0;width:103px;text-align:center">99,85% aa</span></div>
<div class="c rg" style="left:1400px;top:935px;width:103px;height:40px;justify-content:flex-start;color:#111;font-size:13px;letter-spacing:-0.3px"><span style="display:block;flex-shrink:0;width:103px;text-align:center">104,16% aa</span></div>
<div class="c rg" style="left:1503px;top:935px;width:103px;height:40px;justify-content:flex-start;color:#111;font-size:13px;letter-spacing:-0.3px"><span style="display:block;flex-shrink:0;width:103px;text-align:center">104,16% aa</span></div>
<div class="c rg" style="left:1606px;top:935px;width:103px;height:40px;justify-content:flex-start;color:#111;font-size:13px;letter-spacing:-0.3px"><span style="display:block;flex-shrink:0;width:103px;text-align:center">104,16% aa</span></div>
<div class="c rg" style="left:1709px;top:935px;width:103px;height:40px;justify-content:flex-start;color:#111;font-size:13px;letter-spacing:-0.3px"><span style="display:block;flex-shrink:0;width:103px;text-align:center">104,16% aa</span></div>
<div class="c rg" style="left:1812px;top:935px;width:78px;height:40px;justify-content:flex-start;color:#111;font-size:13px;letter-spacing:-0.3px"><span style="display:block;flex-shrink:0;width:103px;text-align:center">104,16% aa</span></div>
<div style="left:41px;top:974px;width:205px;height:1px;background:#E3E3E3"></div>
<div style="left:257px;top:974px;width:1633px;height:1px;background:#D4D4D4"></div>
<div style="left:370px;top:443px;width:1px;height:532px;background:#D9D9D9"></div>
<div style="left:473px;top:443px;width:1px;height:532px;background:#D9D9D9"></div>
<div style="left:576px;top:443px;width:1px;height:532px;background:#D9D9D9"></div>
<div style="left:679px;top:443px;width:1px;height:532px;background:#D9D9D9"></div>
<div style="left:782px;top:443px;width:1px;height:532px;background:#D9D9D9"></div>
<div style="left:885px;top:443px;width:1px;height:532px;background:#D9D9D9"></div>
<div style="left:988px;top:443px;width:1px;height:532px;background:#D9D9D9"></div>
<div style="left:1091px;top:443px;width:1px;height:532px;background:#D9D9D9"></div>
<div style="left:1194px;top:443px;width:1px;height:532px;background:#D9D9D9"></div>
<div style="left:1297px;top:443px;width:1px;height:532px;background:#D9D9D9"></div>
<div style="left:1400px;top:443px;width:1px;height:532px;background:#D9D9D9"></div>
<div style="left:1503px;top:443px;width:1px;height:532px;background:#D9D9D9"></div>
<div style="left:1606px;top:443px;width:1px;height:532px;background:#D9D9D9"></div>
<div style="left:1709px;top:443px;width:1px;height:532px;background:#D9D9D9"></div>
<div style="left:1812px;top:443px;width:1px;height:532px;background:#D9D9D9"></div>
<div style="left:41px;top:495px;width:205px;height:1px;background:#E3E3E3"></div>
<svg style="left:49px;top:88px" width="30" height="32" viewBox="0 0 30 32">
<path d="M1.8 5.5 H21 V27.8 H1.8 Z" fill="#FAFAFA" stroke="#E87A1E" stroke-width="1.5"/>
<path d="M3 6.5 V26.8 H14" fill="none" stroke="#FDD68A" stroke-width="1.2"/>
<path d="M5.5 8 V4.5 H9 C9.5 0.8 13.5 0.8 14 4.5 H17.5 V8 Z" fill="#fff" stroke="#555" stroke-width="1.1"/>
<rect x="14.6" y="13.6" width="13" height="16.5" fill="#fff" stroke="#333" stroke-width="1.3"/>
</svg>
<div class="t" style="left:48px;top:125px;font-size:12px;color:#242424;letter-spacing:0.2px">Colar</div>
<svg style="left:57px;top:145px" width="8" height="5" viewBox="0 0 8 5"><path d="M1 0.8 L4 3.8 L7 0.8" fill="none" stroke="#444" stroke-width="1.1"/></svg>
<svg style="left:90px;top:87px" width="12" height="17" viewBox="0 0 12 17"><path d="M2.5 1 L8.5 12.5 M9.5 1 L3.5 12.5" stroke="#444" stroke-width="0.9"/><circle cx="3" cy="14" r="1.9" fill="none" stroke="#2B88D8" stroke-width="1.2"/><circle cx="9" cy="14" r="1.9" fill="none" stroke="#2B88D8" stroke-width="1.2"/></svg>
<svg style="left:87px;top:113px" width="18" height="18" viewBox="0 0 18 18"><path d="M7.5 1 H1 V14 H6.5" fill="none" stroke="#333" stroke-width="1.1"/><path d="M1 1 H5" stroke="#333" stroke-width="1.1"/><path d="M6.8 4 H12.5 L16.5 8 V17 H6.8 Z" fill="#fff" stroke="#333" stroke-width="1.1"/><path d="M12.5 4 V8 H16.5" fill="none" stroke="#333" stroke-width="0.9"/><path d="M9 11.5 H14 M9 14 H14" stroke="#333" stroke-width="0.8"/></svg>
<svg style="left:116px;top:120px" width="8" height="5" viewBox="0 0 8 5"><path d="M1 0.8 L4 3.8 L7 0.8" fill="none" stroke="#444" stroke-width="1.1"/></svg>
<svg style="left:88px;top:139px" width="18" height="17" viewBox="0 0 18 17"><path d="M10 6 L14.5 1.5 C15.2 0.8 16.2 0.8 16.8 1.5 C17.4 2.2 17.4 3.1 16.7 3.8 L12.2 8.3" fill="#fff" stroke="#333" stroke-width="1.1"/><path d="M8.5 4.5 L13.8 9.8 L11.5 12 L6.3 6.7 Z" fill="#fff" stroke="#333" stroke-width="1.1"/><path d="M6.3 6.7 L0.8 9 L7 15.8 L11.5 12 Z" fill="#FDD68A" stroke="#E87A1E" stroke-width="1.4" stroke-linejoin="round"/><path d="M1 9 L6 10.5 L7 15.8" fill="none" stroke="#E87A1E" stroke-width="1"/></svg>
<div class="t" style="left:23px;top:165px;font-size:11px;color:#1a1a1a;letter-spacing:0.1px">Área de Transferência</div>
<svg style="left:140px;top:166px" width="9" height="9" viewBox="0 0 9 9"><path d="M0.5 8 V0.5 H8 M2.8 2.8 L8 8 M8 4 V8 H4" fill="none" stroke="#8a8a8a" stroke-width="0.9"/></svg>
<div style="left:151px;top:86px;width:1px;height:88px;background:#D6D6D6"></div>
<div style="left:160px;top:92px;width:122px;height:24px;background:#fff;border:1px solid #8a8a8a;border-radius:4px"></div>
<div class="t" style="left:164px;top:98px;font-size:12.5px;color:#242424">Calibri</div>
<svg style="left:273px;top:102px" width="8" height="5" viewBox="0 0 8 5"><path d="M1 0.8 L4 3.8 L7 0.8" fill="none" stroke="#333" stroke-width="1.1"/></svg>
<div style="left:285px;top:92px;width:43px;height:24px;background:#fff;border:1px solid #8a8a8a;border-radius:4px"></div>
<div class="t" style="left:288px;top:98px;font-size:12.5px;color:#242424;letter-spacing:-0.3px">12</div>
<svg style="left:318px;top:102px" width="8" height="5" viewBox="0 0 8 5"><path d="M1 0.8 L4 3.8 L7 0.8" fill="none" stroke="#333" stroke-width="1.1"/></svg>
<svg style="left:334px;top:95px" width="18" height="15" viewBox="0 0 18 15"><path d="M1 13.8 L6.5 1.2 L12 13.8 M3 9.5 H10" fill="none" stroke="#999" stroke-width="1"/><path d="M11.3 4.7 L13.5 2.5 L15.7 4.7" fill="none" stroke="#aaa" stroke-width="0.9"/></svg>
<svg style="left:361px;top:96px" width="17" height="14" viewBox="0 0 17 14"><path d="M1.5 12.8 L5.8 3.2 L10 12.8 M3.2 9.2 H8.4" fill="none" stroke="#999" stroke-width="1"/><path d="M10 1.2 L12.4 3.4 L14.9 1.2" fill="none" stroke="#aaa" stroke-width="0.9"/></svg>
<div class="t" style="left:166px;top:129px;font-size:14px;font-weight:bold;color:#999">N</div>
<div class="t" style="left:194px;top:129px;font-size:14px;font-style:italic;color:#999;font-family:'Liberation Serif'">I</div>
<div class="t" style="left:219px;top:129px;font-size:14px;color:#999"><u>S</u></div>
<svg style="left:240px;top:135px" width="8" height="5" viewBox="0 0 8 5"><path d="M1 0.8 L4 3.8 L7 0.8" fill="none" stroke="#aaa" stroke-width="1.1"/></svg>
<div style="left:253px;top:125px;width:1px;height:23px;background:#D6D6D6"></div>
<svg style="left:260px;top:128px" width="16" height="16" viewBox="0 0 16 16"><path d="M0.5 0.5 H15.5 V13.5 M0.5 0.5 V13.5 M8 0.5 V13.5 M0.5 7 H15.5" fill="none" stroke="#999" stroke-dasharray="1 1"/><path d="M0 14.5 H16" stroke="#888" stroke-width="1.2"/></svg>
<svg style="left:284px;top:135px" width="8" height="5" viewBox="0 0 8 5"><path d="M1 0.8 L4 3.8 L7 0.8" fill="none" stroke="#aaa" stroke-width="1.1"/></svg>
<div style="left:297px;top:125px;width:1px;height:23px;background:#D6D6D6"></div>
<svg style="left:304px;top:127px" width="17" height="17" viewBox="0 0 17 17"><path d="M6.5 1.5 V3.5 M3 6.5 L7.5 2 L12 6.5 L7.5 11 Z" fill="none" stroke="#999" stroke-width="1"/><path d="M12.5 6 C14 7.5 14.5 9 13.5 10.5" fill="none" stroke="#999" stroke-width="1.1"/><rect x="0" y="13" width="16" height="4" fill="#C4C4C4"/></svg>
<svg style="left:328px;top:135px" width="8" height="5" viewBox="0 0 8 5"><path d="M1 0.8 L4 3.8 L7 0.8" fill="none" stroke="#aaa" stroke-width="1.1"/></svg>
<svg style="left:345px;top:127px" width="17" height="17" viewBox="0 0 17 17"><path d="M3.5 11.5 L8 1 L12.5 11.5 M5.2 7.5 H10.8" fill="none" stroke="#999" stroke-width="1.1"/><rect x="0" y="13" width="16" height="4" fill="#C4C4C4"/></svg>
<svg style="left:368px;top:135px" width="8" height="5" viewBox="0 0 8 5"><path d="M1 0.8 L4 3.8 L7 0.8" fill="none" stroke="#aaa" stroke-width="1.1"/></svg>
<div class="t" style="left:162px;top:165px;width:200px;text-align:center;font-size:11px;color:#1a1a1a;letter-spacing:0.1px">Fonte</div>
<svg style="left:375px;top:166px" width="9" height="9" viewBox="0 0 9 9"><path d="M0.5 8 V0.5 H8 M2.8 2.8 L8 8 M8 4 V8 H4" fill="none" stroke="#8a8a8a" stroke-width="0.9"/></svg>
<div style="left:387px;top:86px;width:1px;height:88px;background:#D6D6D6"></div>
<div style="left:401px;top:96px;width:14px;height:1px;background:#8a8a8a"></div>
<div style="left:403px;top:100px;width:10px;height:1px;background:#8a8a8a"></div>
<div style="left:401px;top:104px;width:14px;height:1px;background:#8a8a8a"></div>
<div style="left:427px;top:99px;width:14px;height:1px;background:#8a8a8a"></div>
<div style="left:429px;top:103px;width:10px;height:1px;background:#8a8a8a"></div>
<div style="left:427px;top:107px;width:14px;height:1px;background:#8a8a8a"></div>
<div style="left:453px;top:103px;width:14px;height:1px;background:#8a8a8a"></div>
<div style="left:455px;top:107px;width:10px;height:1px;background:#8a8a8a"></div>
<div style="left:453px;top:111px;width:14px;height:1px;background:#8a8a8a"></div>
<div style="left:401px;top:129px;width:14px;height:1px;background:#8a8a8a"></div>
<div style="left:427px;top:129px;width:14px;height:1px;background:#8a8a8a"></div>
<div style="left:453px;top:129px;width:14px;height:1px;background:#8a8a8a"></div>
<div style="left:401px;top:133px;width:10px;height:1px;background:#8a8a8a"></div>
<div style="left:429px;top:133px;width:10px;height:1px;background:#8a8a8a"></div>
<div style="left:457px;top:133px;width:10px;height:1px;background:#8a8a8a"></div>
<div style="left:401px;top:137px;width:14px;height:1px;background:#8a8a8a"></div>
<div style="left:427px;top:137px;width:14px;height:1px;background:#8a8a8a"></div>
<div style="left:453px;top:137px;width:14px;height:1px;background:#8a8a8a"></div>
<div style="left:401px;top:141px;width:10px;height:1px;background:#8a8a8a"></div>
<div style="left:429px;top:141px;width:10px;height:1px;background:#8a8a8a"></div>
<div style="left:457px;top:141px;width:10px;height:1px;background:#8a8a8a"></div>
<div style="left:474px;top:92px;width:1px;height:24px;background:#D6D6D6"></div>
<div style="left:474px;top:124px;width:1px;height:24px;background:#D6D6D6"></div>
<svg style="left:480px;top:95px" width="18" height="17" viewBox="0 0 18 17"><path d="M4.5 16 L16.5 4 M12.5 3.5 H16.8 V7.8" fill="none" stroke="#999" stroke-width="0.9"/><text x="0" y="0" font-size="9" fill="#999" font-family="Liberation Sans" transform="translate(3.5 12) rotate(-45)">ab</text></svg>
<svg style="left:501px;top:103px" width="7" height="5" viewBox="0 0 8 5"><path d="M1 0.8 L4 3.8 L7 0.8" fill="none" stroke="#aaa" stroke-width="1.1"/></svg>
<div style="left:482px;top:129px;width:14px;height:1px;background:#8a8a8a"></div>
<div style="left:490px;top:133px;width:6px;height:1px;background:#8a8a8a"></div>
<div style="left:490px;top:137px;width:6px;height:1px;background:#8a8a8a"></div>
<div style="left:482px;top:141px;width:14px;height:1px;background:#8a8a8a"></div>
<div style="left:508px;top:129px;width:14px;height:1px;background:#8a8a8a"></div>
<div style="left:516px;top:133px;width:6px;height:1px;background:#8a8a8a"></div>
<div style="left:516px;top:137px;width:6px;height:1px;background:#8a8a8a"></div>
<div style="left:508px;top:141px;width:14px;height:1px;background:#8a8a8a"></div>
<svg style="left:482px;top:132px" width="8" height="7" viewBox="0 0 8 7"><path d="M7.5 3.5 H0.8 M3.5 0.8 L0.8 3.5 L3.5 6.2" fill="none" stroke="#aaa" stroke-width="0.9"/></svg>
<svg style="left:508px;top:132px" width="8" height="7" viewBox="0 0 8 7"><path d="M0.5 3.5 H7.2 M4.5 0.8 L7.2 3.5 L4.5 6.2" fill="none" stroke="#aaa" stroke-width="0.9"/></svg>
<div style="left:534px;top:92px;width:1px;height:56px;background:#D6D6D6"></div>
<div class="t" style="left:546px;top:96px;font-size:12.5px;color:#aaa"><span style="font-size:9px;line-height:8px;display:inline-block;vertical-align:middle;width:14px">ab<br>c&#8617;</span></div>
<div class="t" style="left:564px;top:99px;font-size:12.6px;color:#aaa;letter-spacing:-0.2px">Quebrar Texto Automaticamente</div>
<svg style="left:544px;top:128px" width="15" height="15" viewBox="0 0 15 15"><rect x="0.5" y="0.5" width="14" height="14" fill="none" stroke="#999"/><path d="M0.5 3.5 H14.5 M0.5 11.5 H14.5 M7.5 0.5 V3.5 M7.5 11.5 V14.5" stroke="#999"/><path d="M2.5 7.5 H12.5 M4.5 5.5 L2.5 7.5 L4.5 9.5 M10.5 5.5 L12.5 7.5 L10.5 9.5" fill="none" stroke="#999" stroke-width="0.9"/></svg>
<div class="t" style="left:564px;top:131px;font-size:12.6px;color:#aaa;letter-spacing:-0.45px">Mesclar e Centralizar</div>
<svg style="left:689px;top:135px" width="8" height="5" viewBox="0 0 8 5"><path d="M1 0.8 L4 3.8 L7 0.8" fill="none" stroke="#aaa" stroke-width="1.1"/></svg>
<div class="t" style="left:463px;top:165px;width:200px;text-align:center;font-size:11px;color:#1a1a1a;letter-spacing:0.1px">Alinhamento</div>
<svg style="left:741px;top:166px" width="9" height="9" viewBox="0 0 9 9"><path d="M0.5 8 V0.5 H8 M2.8 2.8 L8 8 M8 4 V8 H4" fill="none" stroke="#8a8a8a" stroke-width="0.9"/></svg>
<div style="left:753px;top:86px;width:1px;height:88px;background:#D6D6D6"></div>
<div style="left:762px;top:92px;width:146px;height:24px;background:#F0F0F0;border:1px solid #E0E0E0;border-radius:4px"></div>
<svg style="left:896px;top:102px" width="8" height="5" viewBox="0 0 8 5"><path d="M1 0.8 L4 3.8 L7 0.8" fill="none" stroke="#bbb" stroke-width="1.1"/></svg>
<svg style="left:765px;top:129px" width="19" height="16" viewBox="0 0 19 16"><rect x="0.5" y="1.5" width="14" height="9" fill="none" stroke="#999"/><rect x="2.5" y="3.5" width="10" height="5" fill="none" stroke="#bbb" stroke-width="0.8"/><text x="3.2" y="7.8" font-size="5.5" fill="#999" font-family="Liberation Sans">cr</text><ellipse cx="14" cy="10" rx="3.8" ry="1.6" fill="#fff" stroke="#999" stroke-width="0.9"/><path d="M10.2 10 V14 C10.2 15.6 17.8 15.6 17.8 14 V10" fill="#fff" stroke="#999" stroke-width="0.9"/><path d="M10.2 12 C10.2 13.6 17.8 13.6 17.8 12" fill="none" stroke="#999" stroke-width="0.9"/></svg>
<svg style="left:789px;top:135px" width="8" height="5" viewBox="0 0 8 5"><path d="M1 0.8 L4 3.8 L7 0.8" fill="none" stroke="#333" stroke-width="1.1"/></svg>
<div class="t" style="left:806px;top:127px;font-size:18px;color:#999">%</div>
<div class="t" style="left:832px;top:131px;font-size:9.5px;color:#aaa;letter-spacing:-0.4px">000</div>
<div style="left:855px;top:124px;width:1px;height:24px;background:#D6D6D6"></div>
<svg style="left:861px;top:127px" width="18" height="18" viewBox="0 0 18 18"><path d="M8 4.5 H1.5 M4 2 L1.5 4.5 L4 7" fill="none" stroke="#aaa" stroke-width="0.9"/><text x="10" y="8.5" font-size="8.5" fill="#aaa" font-family="Liberation Sans">0</text><text x="4" y="16.5" font-size="8.5" fill="#aaa" font-family="Liberation Sans">,00</text></svg>
<svg style="left:887px;top:127px" width="18" height="18" viewBox="0 0 18 18"><text x="3" y="8.5" font-size="8.5" fill="#aaa" font-family="Liberation Sans">,00</text><path d="M1 12.5 H8 M5.5 10 L8 12.5 L5.5 15" fill="none" stroke="#aaa" stroke-width="0.9"/><text x="10" y="16.5" font-size="8.5" fill="#aaa" font-family="Liberation Sans">0</text></svg>
<div class="t" style="left:726px;top:165px;width:200px;text-align:center;font-size:11px;color:#1a1a1a;letter-spacing:0.1px">Número</div>
<svg style="left:903px;top:166px" width="9" height="9" viewBox="0 0 9 9"><path d="M0.5 8 V0.5 H8 M2.8 2.8 L8 8 M8 4 V8 H4" fill="none" stroke="#8a8a8a" stroke-width="0.9"/></svg>
<div style="left:915px;top:86px;width:1px;height:88px;background:#D6D6D6"></div>
<svg style="left:950px;top:92px" width="29" height="23" viewBox="0 0 29 23"><rect x="0.5" y="0.5" width="27" height="21" fill="#f5f5f5" stroke="#999"/><rect x="5.5" y="1" width="11.5" height="6.5" fill="#ccc"/><rect x="5.5" y="7.5" width="8" height="7" fill="#ccc"/><rect x="5.5" y="14.5" width="14" height="7" fill="#ccc"/><path d="M0.5 7.5 H27.5 M0.5 14.5 H27.5 M5.5 0.5 V21.5 M22.5 0.5 V21.5" stroke="#999"/><path d="M17 0.5 V7.5 M13.5 7.5 V14.5 M19.5 14.5 V21.5" stroke="#999"/></svg>
<div class="c" style="left:913px;top:123px;width:100px;height:15px;font-size:12.5px;color:#aaa;letter-spacing:-0.2px">Formatação</div>
<div class="c" style="left:913px;top:139px;width:100px;height:15px;font-size:12.5px;color:#aaa;letter-spacing:-0.2px">Condicional &#8964;</div>
<svg style="left:1035px;top:92px" width="32" height="28" viewBox="0 0 32 28"><rect x="0.5" y="0.5" width="27.5" height="21" fill="#f3f3f3" stroke="#999"/><rect x="10" y="7.5" width="18" height="14" fill="#cfcfcf"/><path d="M0.5 7.5 H28 M0.5 14.5 H28 M10 0.5 V21.5 M19 0.5 V21.5" stroke="#999"/><path d="M29.5 7 C30.5 6 31.5 7 31 8 L20 21 L17.5 19 Z" fill="#eee" stroke="#999" stroke-width="0.9"/><path d="M17.5 19 C14 18.5 12.5 21.5 11 26 C15 25.5 19.5 24.5 20 21 Z" fill="#ccc" stroke="#999" stroke-width="0.9"/></svg>
<div class="c" style="left:998px;top:123px;width:100px;height:15px;font-size:12.5px;color:#aaa;letter-spacing:-0.3px">Formatar como</div>
<div class="c" style="left:998px;top:139px;width:100px;height:15px;font-size:12.5px;color:#aaa;letter-spacing:-0.2px">Tabela &#8964;</div>
<svg style="left:1108px;top:92px" width="32" height="28" viewBox="0 0 32 28"><rect x="0.5" y="0.5" width="27.5" height="21" fill="#f3f3f3" stroke="#999"/><rect x="5.5" y="5" width="17" height="16.5" fill="#cfcfcf"/><path d="M0.5 5 H28 M0.5 17 H28 M5.5 0.5 V21.5 M22.5 0.5 V21.5" stroke="#999"/><path d="M29.5 7 C30.5 6 31.5 7 31 8 L20 21 L17.5 19 Z" fill="#eee" stroke="#999" stroke-width="0.9"/><path d="M17.5 19 C14 18.5 12.5 21.5 11 26 C15 25.5 19.5 24.5 20 21 Z" fill="#ccc" stroke="#999" stroke-width="0.9"/></svg>
<div class="c" style="left:1071px;top:123px;width:100px;height:15px;font-size:12.5px;color:#aaa;letter-spacing:-0.2px">Estilos de</div>
<div class="c" style="left:1071px;top:139px;width:100px;height:15px;font-size:12.5px;color:#aaa;letter-spacing:-0.2px">Célula &#8964;</div>
<div class="t" style="left:936px;top:165px;width:200px;text-align:center;font-size:11px;color:#1a1a1a;letter-spacing:0.1px">Estilos</div>
<div style="left:1156px;top:86px;width:1px;height:88px;background:#D6D6D6"></div>
<svg style="left:1169px;top:89px" width="17" height="15" viewBox="0 0 17 15"><rect x="6" y="4.5" width="10" height="5" fill="#d0d0d0"/><path d="M0.5 4.5 H16 M0.5 9.5 H16 M6 0.5 V14 M11 0.5 V14" stroke="#c8c8c8" stroke-width="0.9"/><rect x="0.5" y="0.5" width="15.5" height="13.5" fill="none" stroke="#999" stroke-width="1"/><path d="M8.5 7 H1.5 M4 4.5 L1.5 7 L4 9.5" fill="none" stroke="#aaa" stroke-width="0.9"/></svg>
<div class="t" style="left:1189px;top:91px;font-size:12.6px;color:#aaa;letter-spacing:-0.2px">Inserir</div>
<svg style="left:1238px;top:95px" width="8" height="5" viewBox="0 0 8 5"><path d="M1 0.8 L4 3.8 L7 0.8" fill="none" stroke="#333" stroke-width="1.1"/></svg>
<svg style="left:1169px;top:115px" width="17" height="15" viewBox="0 0 17 15"><path d="M0.5 0.5 H16 V4.5 M0.5 0.5 V4.5 H3.5 V9.5 H0.5 V14 H16 V9.5" fill="none" stroke="#999"/><rect x="3.5" y="4.5" width="5" height="5" fill="#d0d0d0" stroke="#999"/><path d="M0.5 4.5 H16 M0.5 9.5 H16 M6 0.5 V4.5 M6 9.5 V14 M11 0.5 V4.5 M11 9.5 V14" stroke="#c8c8c8" stroke-width="0.9"/><path d="M10.5 5 L15 9.5 M15 5 L10.5 9.5" stroke="#aaa" stroke-width="0.9"/></svg>
<div class="t" style="left:1189px;top:117px;font-size:12.6px;color:#aaa;letter-spacing:-0.2px">Excluir</div>
<svg style="left:1240px;top:121px" width="8" height="5" viewBox="0 0 8 5"><path d="M1 0.8 L4 3.8 L7 0.8" fill="none" stroke="#333" stroke-width="1.1"/></svg>
<svg style="left:1169px;top:139px" width="17" height="18" viewBox="0 0 17 18"><path d="M3.5 1.3 H13 M3.5 0 V2.6 M13 0 V2.6" stroke="#2B88D8" stroke-width="1"/><path d="M2 3.5 H0.5 V16.5 H16 V3.5 H14.5" fill="none" stroke="#333" stroke-width="1.1"/><path d="M0.5 12 H16 M4.5 4 V16.5 M12 4 V16.5" stroke="#888" stroke-width="0.8"/><rect x="4.5" y="6.5" width="7.5" height="5.5" fill="#9CCBF2" stroke="#1F73C9" stroke-width="1.2"/></svg>
<div class="t" style="left:1188px;top:143px;font-size:12.6px;color:#242424">Formatar</div>
<svg style="left:1240px;top:147px" width="8" height="5" viewBox="0 0 8 5"><path d="M1 0.8 L4 3.8 L7 0.8" fill="none" stroke="#444" stroke-width="1.1"/></svg>
<div class="t" style="left:1110px;top:165px;width:200px;text-align:center;font-size:11px;color:#1a1a1a;letter-spacing:0.1px">Células</div>
<div style="left:1264px;top:86px;width:1px;height:88px;background:#D6D6D6"></div>
<svg style="left:1278px;top:88px" width="14" height="16" viewBox="0 0 14 16"><path d="M13 2.5 V1 H1 L7.5 8 L1 15 H13 V13.5" fill="none" stroke="#333" stroke-width="1.1"/></svg>
<svg style="left:1305px;top:95px" width="8" height="5" viewBox="0 0 8 5"><path d="M1 0.8 L4 3.8 L7 0.8" fill="none" stroke="#444" stroke-width="1.1"/></svg>
<svg style="left:1277px;top:115px" width="16" height="14" viewBox="0 0 16 14"><rect x="0.5" y="0.5" width="15" height="13" fill="none" stroke="#333"/><path d="M0.5 2.5 H15.5" stroke="#333"/><path d="M7.5 5 V11 M4.8 8.3 L7.5 11 L10.2 8.3" fill="none" stroke="#2B88D8" stroke-width="1.1"/></svg>
<svg style="left:1298px;top:121px" width="8" height="5" viewBox="0 0 8 5"><path d="M1 0.8 L4 3.8 L7 0.8" fill="none" stroke="#444" stroke-width="1.1"/></svg>
<svg style="left:1277px;top:140px" width="16" height="16" viewBox="0 0 16 16"><path d="M0.8 9.5 L8 2.3 L12.8 7 L5.5 14.3 Z" fill="#fff" stroke="#B146C2" stroke-width="1.1"/><path d="M0.8 9.5 L3.8 6.5 L8.5 11.2 L5.5 14.3 Z" fill="#CF8ADB" stroke="#B146C2" stroke-width="1.1"/></svg>
<svg style="left:1298px;top:147px" width="8" height="5" viewBox="0 0 8 5"><path d="M1 0.8 L4 3.8 L7 0.8" fill="none" stroke="#444" stroke-width="1.1"/></svg>
<svg style="left:1337px;top:88px" width="30" height="30" viewBox="0 0 30 30"><path d="M1 13 L5 1.8 H6.2 L10.2 13 M2.5 9 H8.7" fill="none" stroke="#2B88D8" stroke-width="1.2"/><path d="M1.5 16.5 H9.5 L1.5 27.2 H10" fill="none" stroke="#333" stroke-width="1.2"/><path d="M13 8.5 H28.5 V10.5 L23 16 V23 H19.5 V16 L13 10.5 Z" fill="none" stroke="#333" stroke-width="1.1"/></svg>
<div class="c" style="left:1301px;top:123px;width:100px;height:15px;font-size:12.6px;color:#242424;letter-spacing:-0.2px">Classificar</div>
<div class="c" style="left:1301px;top:139px;width:100px;height:15px;font-size:12.6px;color:#242424;letter-spacing:-0.2px">e Filtrar &#8964;</div>
<svg style="left:1402px;top:88px" width="32" height="32" viewBox="0 0 32 32"><circle cx="19.6" cy="11.3" r="10" fill="none" stroke="#333" stroke-width="1.1"/><path d="M12.6 18.5 L1.5 29.8" stroke="#333" stroke-width="1.1"/></svg>
<div class="c" style="left:1368px;top:123px;width:100px;height:15px;font-size:12.6px;color:#242424;letter-spacing:-0.2px">Localizar e</div>
<div class="c" style="left:1368px;top:139px;width:100px;height:15px;font-size:12.6px;color:#242424;letter-spacing:-0.2px">Selecionar &#8964;</div>
<div class="t" style="left:1262px;top:165px;width:200px;text-align:center;font-size:11px;color:#1a1a1a;letter-spacing:0.1px">Edição</div>
<div style="left:1460px;top:86px;width:1px;height:88px;background:#D6D6D6"></div>
<svg style="left:1492px;top:89px" width="28" height="28" viewBox="0 0 28 28"><rect x="0.7" y="0.7" width="26.6" height="26.6" fill="none" stroke="#D83B01" stroke-width="1.4"/><rect x="4" y="4" width="8.5" height="8.5" fill="none" stroke="#D83B01" stroke-width="1.2"/><rect x="15.5" y="4" width="8.5" height="8.5" fill="none" stroke="#D83B01" stroke-width="1.2"/><rect x="4" y="15.5" width="8.5" height="8.5" fill="none" stroke="#D83B01" stroke-width="1.2"/><rect x="15.5" y="15.5" width="8.5" height="8.5" fill="none" stroke="#D83B01" stroke-width="1.2"/></svg>
<div class="c" style="left:1455px;top:123px;width:100px;height:15px;font-size:12.6px;color:#242424;letter-spacing:-0.2px">Suplementos</div>
<div class="t" style="left:1405px;top:165px;width:200px;text-align:center;font-size:11px;color:#1a1a1a;letter-spacing:0.1px">Suplementos</div>
<div style="left:1550px;top:86px;width:1px;height:88px;background:#D6D6D6"></div>
<svg style="left:1567px;top:89px" width="30" height="28" viewBox="0 0 30 28">
<defs><linearGradient id="cp1" x1="0" y1="0" x2="0" y2="1"><stop offset="0" stop-color="#16A6F7"/><stop offset="0.3" stop-color="#1590E0"/><stop offset="0.6" stop-color="#4FAE5A"/><stop offset="1" stop-color="#F2CC00"/></linearGradient>
<linearGradient id="cp2" x1="0" y1="0" x2="0" y2="1"><stop offset="0" stop-color="#A24BF0"/><stop offset="0.45" stop-color="#EC4F90"/><stop offset="1" stop-color="#FFA050"/></linearGradient></defs>
<path d="M13.5 0.5 H19 C21 0.5 22 2.5 23 5.5 L24 8.5 H17 Z" fill="#1E4FD6"/>
<path d="M7 19 H13 L14.5 27.5 C11.5 27.8 9.5 26.5 8.5 23.5 Z" fill="#EE5030"/>
<path d="M7 0.2 H19.5 C18 0.2 17.2 1.5 16.6 3.3 L11.6 18.3 C11.2 19.4 10.5 19.8 9.5 19.8 H2.3 C0.8 19.8 -0.1 18.8 0.3 17 L4.4 3.3 C5 1.2 5.8 0.2 7 0.2 Z" fill="url(#cp1)"/>
<path d="M20.2 7.8 H27.7 C29.2 7.8 30.1 8.9 29.7 10.7 L25.7 24.5 C25.1 26.5 24.2 27.6 22.7 27.6 H10.5 C12 27.6 12.8 26.5 13.4 24.7 L18.2 9.6 C18.6 8.4 19.2 7.8 20.2 7.8 Z" fill="url(#cp2)"/>
</svg>
<div class="c" style="left:1531px;top:123px;width:100px;height:15px;font-size:12.6px;color:#242424;letter-spacing:-0.2px">Copilot</div>
<div style="left:1613px;top:86px;width:1px;height:88px;background:#D6D6D6"></div>
<svg style="left:1665px;top:91px" width="28" height="28" viewBox="0 0 28 28"><path d="M13 23 H3 C1.8 23 1 22.2 1 21 V3 C1 1.8 1.8 1 3 1 H13.5 L18.5 6 V15" fill="none" stroke="#2B6FD6" stroke-width="1.3"/><path d="M13.5 1 V6 H18.5" fill="none" stroke="#2B6FD6" stroke-width="0"/><path d="M9 6.5 C9.5 10 7.5 13 5 15 M9.2 10 C10.5 12.5 12.5 13.5 14.5 13.8" fill="none" stroke="#2B6FD6" stroke-width="1"/><g transform="rotate(-45 18.5 19)" fill="#fff" stroke="#2B6FD6" stroke-width="1.3"><rect x="10.5" y="16.5" width="9" height="5" rx="2.5"/><rect x="17.5" y="16.5" width="9" height="5" rx="2.5"/></g></svg>
<div class="c" style="left:1614px;top:123px;width:120px;height:15px;font-size:12.6px;color:#242424;letter-spacing:-0.2px">Criar PDF e</div>
<div class="c" style="left:1614px;top:139px;width:120px;height:15px;font-size:12.6px;color:#242424;letter-spacing:-0.3px">compartilhar o link</div>
<svg style="left:1787px;top:91px" width="28" height="28" viewBox="0 0 28 28"><path d="M13 23 H3 C1.8 23 1 22.2 1 21 V3 C1 1.8 1.8 1 3 1 H13.5 L18.5 6 V15" fill="none" stroke="#2B6FD6" stroke-width="1.3"/><path d="M13.5 1 V6 H18.5" fill="none" stroke="#2B6FD6" stroke-width="0"/><path d="M9 6.5 C9.5 10 7.5 13 5 15 M9.2 10 C10.5 12.5 12.5 13.5 14.5 13.8" fill="none" stroke="#2B6FD6" stroke-width="1"/><rect x="13.5" y="17.3" width="13" height="9.5" rx="1.2" fill="#fff" stroke="#2B6FD6" stroke-width="1.2"/><path d="M14 18 L20 22.5 L26 18" fill="none" stroke="#2B6FD6" stroke-width="1.2"/></svg>
<div class="c" style="left:1725px;top:123px;width:141px;height:15px;font-size:12.6px;color:#242424;letter-spacing:-0.3px">Criar PDF e compartilhar</div>
<div class="c" style="left:1725px;top:139px;width:141px;height:15px;font-size:12.6px;color:#242424;letter-spacing:-0.2px">via Outlook</div>
<div class="t" style="left:1642px;top:165px;width:200px;text-align:center;font-size:11px;color:#1a1a1a;letter-spacing:0.1px">Adobe Acrobat</div>
<div style="left:1870px;top:86px;width:1px;height:88px;background:#D6D6D6"></div>
<svg style="left:1883px;top:163px" width="12" height="7" viewBox="0 0 12 7"><path d="M1 1 L6 6 L11 1" fill="none" stroke="#333" stroke-width="1.2"/></svg>
</body></html>
